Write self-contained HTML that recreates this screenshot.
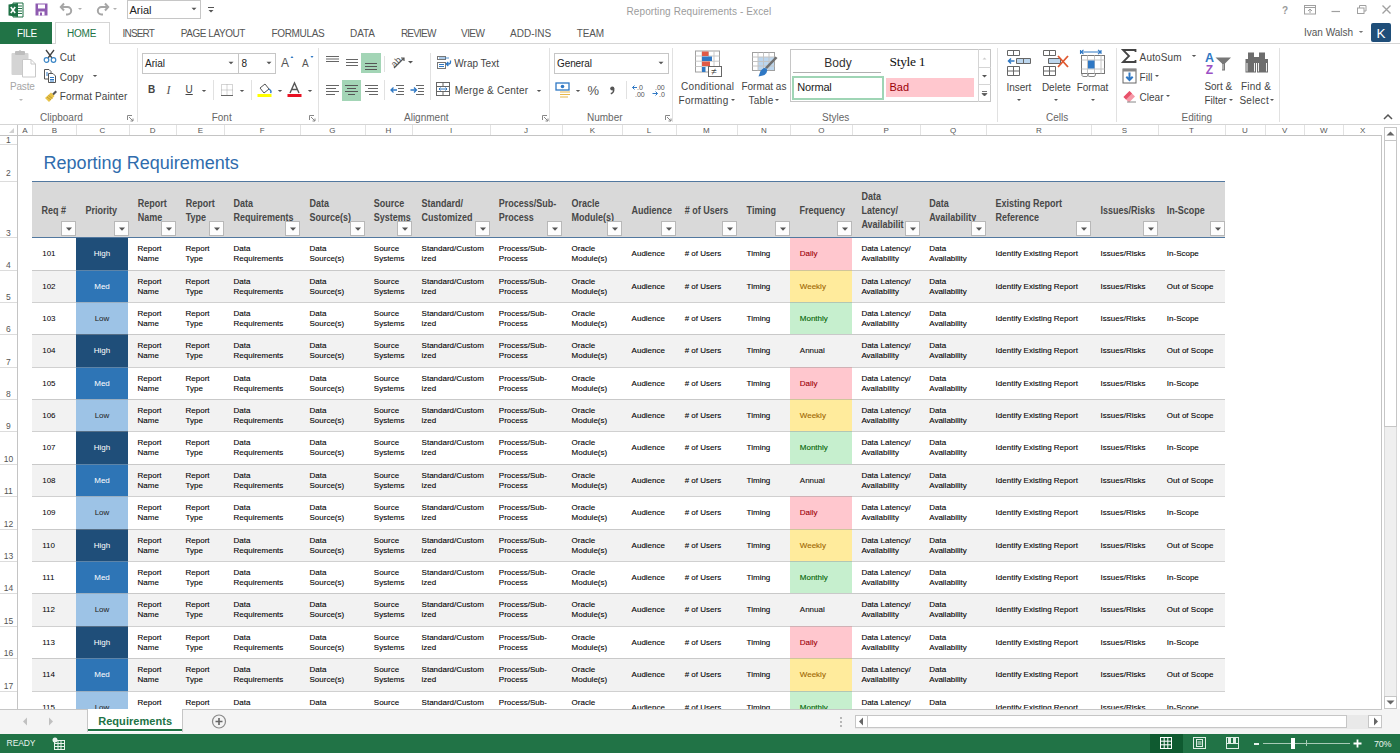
<!DOCTYPE html>
<html><head><meta charset="utf-8"><title>Reporting Requirements - Excel</title>
<style>
html,body{margin:0;padding:0;}
body{width:1400px;height:753px;position:relative;overflow:hidden;background:#fff;font-family:"Liberation Sans", sans-serif;}
.a{position:absolute;}
.t{white-space:nowrap;}
svg.a{overflow:visible;}
</style></head><body>
<svg class="a" style="left:8px;top:2px" width="16" height="16" viewBox="0 0 16 16"><path d="M5 1 L15 1 L15 15 L5 15 Z" fill="#fff" stroke="#1e7145" stroke-width="1"/><path d="M10 4h4M10 6.5h4M10 9h4M10 11.5h4" stroke="#1e7145" stroke-width="1"/><path d="M0.5 2.5 L10 1 L10 15 L0.5 13.5 Z" fill="#1e7145"/><path d="M2.8 5 L7.2 11 M7.2 5 L2.8 11" stroke="#fff" stroke-width="1.6"/></svg>
<svg class="a" style="left:35px;top:3px" width="13" height="13" viewBox="0 0 13 13"><path d="M0.5 0.5 H12.5 V12.5 H0.5 Z" fill="#8e5bb0"/><rect x="3" y="1.5" width="7" height="4" fill="#fff"/><rect x="3.5" y="8.5" width="6" height="4" fill="#fff"/><rect x="5" y="9.5" width="2" height="3" fill="#8e5bb0"/></svg>
<svg class="a" style="left:59px;top:2px" width="15" height="13" viewBox="0 0 15 13"><path d="M5 1.5 L1.8 5 L5 8.5" fill="none" stroke="#a6a6a6" stroke-width="2"/><path d="M2 5 H8.5 A3.6 3.6 0 0 1 8.5 12.4 H7" fill="none" stroke="#a6a6a6" stroke-width="2"/></svg>
<svg class="a" style="left:76px;top:6px" width="8" height="6" viewBox="0 0 8 6"><path d="M2 2.0 L6 2.0 L4 4.0 Z" fill="#b0b0b0"/></svg>
<svg class="a" style="left:95px;top:2px" width="15" height="13" viewBox="0 0 15 13"><path d="M10 1.5 L13.2 5 L10 8.5" fill="none" stroke="#a6a6a6" stroke-width="2"/><path d="M13 5 H6.5 A3.6 3.6 0 0 0 6.5 12.4 H8" fill="none" stroke="#a6a6a6" stroke-width="2"/></svg>
<svg class="a" style="left:111px;top:6px" width="8" height="6" viewBox="0 0 8 6"><path d="M2 2.0 L6 2.0 L4 4.0 Z" fill="#b0b0b0"/></svg>
<div class="a" style="left:127px;top:0px;width:74px;height:19px;border:1px solid #c6c6c6;background:#fff;box-sizing:border-box;"></div>
<div class="a t" style="left:129.50px;top:5.46px;font-size:11px;line-height:11px;color:#222;font-weight:400;">Arial</div>
<svg class="a" style="left:190px;top:6px" width="8" height="6" viewBox="0 0 8 6"><path d="M1.5 1.75 L6.5 1.75 L4 4.25 Z" fill="#555"/></svg>
<svg class="a" style="left:207px;top:6px" width="8" height="8" viewBox="0 0 8 8"><path d="M1 1.5 H7" stroke="#555" stroke-width="1"/><path d="M1.5 4 H6.5 L4 6.5 Z" fill="#555"/></svg>
<div class="a t" style="left:626.50px;top:7.30px;font-size:10px;line-height:10px;color:#9c9c9c;font-weight:400;letter-spacing:0.1px">Reporting Requirements - Excel</div>
<svg class="a" style="left:1280px;top:4px" width="112" height="12" viewBox="0 0 112 12"><text x="2" y="9.5" font-family="Liberation Sans" font-size="10" font-weight="700" fill="#9a9a9a">?</text><rect x="24.5" y="1.5" width="11" height="8.5" fill="none" stroke="#a0a0a0" stroke-width="1"/><path d="M25 3.5 H35" stroke="#a0a0a0"/><path d="M30 9 V5 M28 7 L30 5 L32 7" fill="none" stroke="#a0a0a0"/><path d="M51.5 7.5 H60" stroke="#a0a0a0" stroke-width="1.2"/><rect x="77.5" y="4" width="6.5" height="5.5" fill="none" stroke="#a0a0a0"/><path d="M79.5 4 V1.5 H86 V7 H84" fill="none" stroke="#a0a0a0"/><path d="M102.5 1.5 L110.5 9.5 M110.5 1.5 L102.5 9.5" stroke="#a0a0a0" stroke-width="1.3"/></svg>
<div class="a" style="left:0px;top:43px;width:1400px;height:1px;background:#d5d5d5;"></div>
<div class="a" style="left:0px;top:22px;width:52px;height:22px;background:#217346;"></div>
<div class="a t" style="left:17.00px;top:28.79px;font-size:10px;line-height:10px;color:#fff;font-weight:400;letter-spacing:-0.3px">FILE</div>
<div class="a" style="left:55px;top:22px;width:55px;height:22px;background:#fff;border:1px solid #d5d5d5;border-bottom:none;box-sizing:border-box;"></div>
<div class="a t" style="left:67.00px;top:28.79px;font-size:10px;line-height:10px;color:#217346;font-weight:400;letter-spacing:-0.2px">HOME</div>
<div class="a t" style="left:122.60px;top:28.79px;font-size:10px;line-height:10px;color:#555;font-weight:400;letter-spacing:-0.85px">INSERT</div>
<div class="a t" style="left:180.70px;top:28.79px;font-size:10px;line-height:10px;color:#555;font-weight:400;letter-spacing:-0.44px">PAGE LAYOUT</div>
<div class="a t" style="left:271.60px;top:28.79px;font-size:10px;line-height:10px;color:#555;font-weight:400;letter-spacing:-0.36px">FORMULAS</div>
<div class="a t" style="left:350.00px;top:28.79px;font-size:10px;line-height:10px;color:#555;font-weight:400;letter-spacing:-0.07px">DATA</div>
<div class="a t" style="left:400.90px;top:28.79px;font-size:10px;line-height:10px;color:#555;font-weight:400;letter-spacing:-0.79px">REVIEW</div>
<div class="a t" style="left:461.00px;top:28.79px;font-size:10px;line-height:10px;color:#555;font-weight:400;letter-spacing:-0.54px">VIEW</div>
<div class="a t" style="left:510.00px;top:28.79px;font-size:10px;line-height:10px;color:#555;font-weight:400;letter-spacing:0.03px">ADD-INS</div>
<div class="a t" style="left:576.70px;top:28.79px;font-size:10px;line-height:10px;color:#555;font-weight:400;letter-spacing:-0.12px">TEAM</div>
<div class="a t" style="left:1304.00px;top:28.20px;font-size:10px;line-height:10px;color:#555;font-weight:400;">Ivan Walsh</div>
<svg class="a" style="left:1357px;top:29px" width="8" height="6" viewBox="0 0 8 6"><path d="M1.7999999999999998 1.9 L6.2 1.9 L4 4.1 Z" fill="#777"/></svg>
<div class="a" style="left:1371px;top:23px;width:20px;height:19px;background:#1f4e79;border-radius:2px;"></div>
<div class="a t" style="left:1371.00px;width:20px;text-align:center;top:26.74px;font-size:13.5px;line-height:13.5px;color:#fff;font-weight:400;font-weight:400">K</div>
<div class="a" style="left:0px;top:124px;width:1400px;height:1px;background:#d5d5d5;"></div>
<div class="a" style="left:137px;top:48px;width:1px;height:74px;background:#e1e1e1;"></div>
<div class="a" style="left:318px;top:48px;width:1px;height:74px;background:#e1e1e1;"></div>
<div class="a" style="left:549px;top:48px;width:1px;height:74px;background:#e1e1e1;"></div>
<div class="a" style="left:672px;top:48px;width:1px;height:74px;background:#e1e1e1;"></div>
<div class="a" style="left:997px;top:48px;width:1px;height:74px;background:#e1e1e1;"></div>
<div class="a" style="left:1116px;top:48px;width:1px;height:74px;background:#e1e1e1;"></div>
<div class="a" style="left:1279px;top:48px;width:1px;height:74px;background:#e1e1e1;"></div>
<div class="a t" style="left:40.00px;top:113.19px;font-size:10px;line-height:10px;color:#666;font-weight:400;">Clipboard</div>
<div class="a t" style="left:211.70px;top:113.19px;font-size:10px;line-height:10px;color:#666;font-weight:400;">Font</div>
<div class="a t" style="left:404.00px;top:113.19px;font-size:10px;line-height:10px;color:#666;font-weight:400;">Alignment</div>
<div class="a t" style="left:587.00px;top:113.19px;font-size:10px;line-height:10px;color:#666;font-weight:400;">Number</div>
<div class="a t" style="left:822.00px;top:113.19px;font-size:10px;line-height:10px;color:#666;font-weight:400;">Styles</div>
<div class="a t" style="left:1046.00px;top:113.19px;font-size:10px;line-height:10px;color:#666;font-weight:400;">Cells</div>
<div class="a t" style="left:1181.60px;top:113.19px;font-size:10px;line-height:10px;color:#666;font-weight:400;">Editing</div>
<svg class="a" style="left:127px;top:115px" width="7" height="7" viewBox="0 0 7 7"><path d="M0.5 5 V0.5 H5" fill="none" stroke="#888"/><path d="M2 2 L6 6 M3.5 6 H6 V3.5" fill="none" stroke="#888"/></svg>
<svg class="a" style="left:309px;top:115px" width="7" height="7" viewBox="0 0 7 7"><path d="M0.5 5 V0.5 H5" fill="none" stroke="#888"/><path d="M2 2 L6 6 M3.5 6 H6 V3.5" fill="none" stroke="#888"/></svg>
<svg class="a" style="left:542px;top:115px" width="7" height="7" viewBox="0 0 7 7"><path d="M0.5 5 V0.5 H5" fill="none" stroke="#888"/><path d="M2 2 L6 6 M3.5 6 H6 V3.5" fill="none" stroke="#888"/></svg>
<svg class="a" style="left:665px;top:115px" width="7" height="7" viewBox="0 0 7 7"><path d="M0.5 5 V0.5 H5" fill="none" stroke="#888"/><path d="M2 2 L6 6 M3.5 6 H6 V3.5" fill="none" stroke="#888"/></svg>
<svg class="a" style="left:1383px;top:114px" width="10" height="6" viewBox="0 0 10 6"><path d="M1 5 L5 1 L9 5" fill="none" stroke="#555" stroke-width="1.5"/></svg>
<svg class="a" style="left:10px;top:50px" width="28" height="28" viewBox="0 0 28 28"><rect x="1.5" y="3" width="17" height="22" rx="1" fill="#d4d4d4"/><rect x="5" y="1" width="10" height="4" rx="1" fill="#bdbdbd"/><circle cx="10" cy="1.5" r="1.3" fill="#bdbdbd"/><path d="M12.5 9.5 H21 L25.5 14 V27 H12.5 Z" fill="#fff" stroke="#c8c8c8"/><path d="M21 9.5 V14 H25.5" fill="none" stroke="#c8c8c8"/></svg>
<div class="a t" style="left:10.00px;top:81.69px;font-size:10px;line-height:10px;color:#a6a6a6;font-weight:400;letter-spacing:-0.2px">Paste</div>
<svg class="a" style="left:17px;top:97px" width="8" height="6" viewBox="0 0 8 6"><path d="M2 2.0 L6 2.0 L4 4.0 Z" fill="#b8b8b8"/></svg>
<svg class="a" style="left:43px;top:49px" width="14" height="14" viewBox="0 0 14 14"><path d="M3 1 L9 9 M11 1 L5 9" stroke="#444" stroke-width="1.3"/><circle cx="3.5" cy="11" r="2.3" fill="none" stroke="#3b86c6" stroke-width="1.2"/><circle cx="10.5" cy="11" r="2.3" fill="none" stroke="#3b86c6" stroke-width="1.2"/></svg>
<div class="a t" style="left:59.80px;top:52.90px;font-size:10px;line-height:10px;color:#444;font-weight:400;">Cut</div>
<svg class="a" style="left:43px;top:69px" width="14" height="14" viewBox="0 0 14 14"><path d="M1.5 0.5 H6 L8 2.5 V10 H1.5 Z" fill="#fff" stroke="#555"/><path d="M5.5 4.5 H10 L12.5 7 V13.5 H5.5 Z" fill="#fff" stroke="#555"/><path d="M7 8.5 H11 M7 10.5 H11 M7 12 H11" stroke="#2f78c4"/><path d="M3 4 H5 M3 6 H5" stroke="#2f78c4"/></svg>
<div class="a t" style="left:59.80px;top:72.59px;font-size:10px;line-height:10px;color:#444;font-weight:400;">Copy</div>
<svg class="a" style="left:91px;top:73px" width="8" height="6" viewBox="0 0 8 6"><path d="M1.7999999999999998 1.9 L6.2 1.9 L4 4.1 Z" fill="#555"/></svg>
<svg class="a" style="left:43px;top:89px" width="15" height="14" viewBox="0 0 15 14"><path d="M9 5 L12.5 1.5 L14 3 L10.5 6.5 Z" fill="#555"/><path d="M2 9 L8 3.5 L11.5 7 L6 13 Z" fill="#e8c34a"/><path d="M4 8 L8 11 M5.5 6.5 L9.5 9.5" stroke="#b8922a" stroke-width="0.8"/></svg>
<div class="a t" style="left:59.80px;top:92.39px;font-size:10px;line-height:10px;color:#444;font-weight:400;letter-spacing:0.1px">Format Painter</div>
<div class="a" style="left:142px;top:53px;width:97px;height:21px;border:1px solid #c6c6c6;background:#fff;box-sizing:border-box;"></div>
<div class="a" style="left:238px;top:53px;width:38px;height:21px;border:1px solid #c6c6c6;background:#fff;box-sizing:border-box;"></div>
<div class="a t" style="left:145.00px;top:59.40px;font-size:10px;line-height:10px;color:#222;font-weight:400;">Arial</div>
<svg class="a" style="left:227px;top:60px" width="8" height="6" viewBox="0 0 8 6"><path d="M1.5 1.75 L6.5 1.75 L4 4.25 Z" fill="#555"/></svg>
<div class="a t" style="left:241.50px;top:59.40px;font-size:10px;line-height:10px;color:#222;font-weight:400;">8</div>
<svg class="a" style="left:265px;top:60px" width="8" height="6" viewBox="0 0 8 6"><path d="M1.5 1.75 L6.5 1.75 L4 4.25 Z" fill="#555"/></svg>
<svg class="a" style="left:280px;top:55px" width="34" height="14" viewBox="0 0 34 14"><text x="1" y="12" font-family="Liberation Sans" font-size="12" fill="#555">A</text><path d="M10.5 3 L12 1 L13.5 3 Z" fill="#2f78c4"/><text x="22" y="12" font-family="Liberation Sans" font-size="10" fill="#555">A</text><path d="M30.5 1 L32 3 L33.5 1 Z" fill="#2f78c4"/></svg>
<div class="a t" style="left:148.00px;top:84.80px;font-size:10px;line-height:10px;color:#444;font-weight:700;">B</div>
<div class="a t" style="left:166.50px;top:83.73px;font-size:12px;line-height:12px;color:#555;font-weight:400;font-style:italic;font-family:'Liberation Serif';">I</div>
<div class="a t" style="left:185.50px;top:84.80px;font-size:10px;line-height:10px;color:#444;font-weight:400;text-decoration:underline">U</div>
<svg class="a" style="left:200px;top:88px" width="8" height="6" viewBox="0 0 8 6"><path d="M1.7999999999999998 1.9 L6.2 1.9 L4 4.1 Z" fill="#555"/></svg>
<div class="a" style="left:213px;top:80px;width:1px;height:20px;background:#e1e1e1;"></div>
<svg class="a" style="left:220px;top:83px" width="14" height="14" viewBox="0 0 14 14"><rect x="1.5" y="1.5" width="11" height="11" fill="none" stroke="#aaa" stroke-dasharray="1 1"/><path d="M7 1.5 V12.5 M1.5 7 H12.5" stroke="#aaa" stroke-dasharray="1 1"/><path d="M1 12.5 H13" stroke="#666"/></svg>
<svg class="a" style="left:238px;top:88px" width="8" height="6" viewBox="0 0 8 6"><path d="M1.7999999999999998 1.9 L6.2 1.9 L4 4.1 Z" fill="#555"/></svg>
<div class="a" style="left:251px;top:80px;width:1px;height:20px;background:#e1e1e1;"></div>
<svg class="a" style="left:257px;top:82px" width="16" height="16" viewBox="0 0 16 16"><path d="M3 6 L8 2 L12 7 L7 11 Z" fill="#fff" stroke="#555"/><path d="M12 7 Q15 9 13.5 11" fill="none" stroke="#2f78c4" stroke-width="1.5"/><rect x="0.5" y="12" width="14" height="3" fill="#ffff00"/></svg>
<svg class="a" style="left:275.5px;top:88px" width="8" height="6" viewBox="0 0 8 6"><path d="M1.7999999999999998 1.9 L6.2 1.9 L4 4.1 Z" fill="#555"/></svg>
<svg class="a" style="left:287px;top:82px" width="16" height="16" viewBox="0 0 16 16"><path d="M3 11 L7.5 1 L12 11 M4.8 7.5 H10.2" fill="none" stroke="#555" stroke-width="1.4"/><rect x="0.5" y="12" width="14" height="3" fill="#e81123"/></svg>
<svg class="a" style="left:305.5px;top:88px" width="8" height="6" viewBox="0 0 8 6"><path d="M1.7999999999999998 1.9 L6.2 1.9 L4 4.1 Z" fill="#555"/></svg>
<svg class="a" style="left:326px;top:56px" width="13" height="7" viewBox="0 0 13 7"><path d="M0 0.5 H13" stroke="#666" stroke-width="1"/><path d="M0 3.0 H13" stroke="#666" stroke-width="1"/><path d="M0 5.5 H13" stroke="#666" stroke-width="1"/></svg>
<svg class="a" style="left:346px;top:59px" width="12" height="8" viewBox="0 0 12 8"><path d="M0 0.5 H12" stroke="#666" stroke-width="1"/><path d="M0 3.5 H12" stroke="#666" stroke-width="1"/><path d="M0 6.5 H12" stroke="#666" stroke-width="1"/></svg>
<div class="a" style="left:361px;top:53px;width:20px;height:20px;background:#a3d5b6;"></div>
<svg class="a" style="left:365px;top:63px" width="12" height="8" viewBox="0 0 12 8"><path d="M0 0.5 H12" stroke="#555" stroke-width="1"/><path d="M0 3.5 H12" stroke="#555" stroke-width="1"/><path d="M0 6.5 H12" stroke="#555" stroke-width="1"/></svg>
<div class="a" style="left:384px;top:56px;width:1px;height:16px;background:#e1e1e1;"></div>
<svg class="a" style="left:390px;top:54px" width="24" height="16" viewBox="0 0 24 16"><text x="1" y="11" font-family="Liberation Sans" font-size="9" fill="#555" transform="rotate(-45 6 8)">ab</text><path d="M4 14 L14 4 M11 4 H14 V7" fill="none" stroke="#555" stroke-width="1.2"/><path d="M18 7 H23 L20.5 9.5 Z" fill="#555"/></svg>
<svg class="a" style="left:326px;top:85px" width="13" height="11" viewBox="0 0 13 11"><path d="M0 0.5 H13" stroke="#666" stroke-width="1"/><path d="M0 3.5 H10" stroke="#666" stroke-width="1"/><path d="M0 6.5 H13" stroke="#666" stroke-width="1"/><path d="M0 9.5 H9" stroke="#666" stroke-width="1"/></svg>
<div class="a" style="left:342px;top:80px;width:19px;height:21px;background:#a3d5b6;"></div>
<svg class="a" style="left:345px;top:85px" width="13" height="11" viewBox="0 0 13 11"><path d="M0 0.5 H13" stroke="#555" stroke-width="1"/><path d="M2 3.5 H11" stroke="#555" stroke-width="1"/><path d="M0 6.5 H13" stroke="#555" stroke-width="1"/><path d="M3 9.5 H10" stroke="#555" stroke-width="1"/></svg>
<svg class="a" style="left:364.5px;top:85px" width="13" height="11" viewBox="0 0 13 11"><path d="M0 0.5 H13" stroke="#666" stroke-width="1"/><path d="M3 3.5 H13" stroke="#666" stroke-width="1"/><path d="M0 6.5 H13" stroke="#666" stroke-width="1"/><path d="M4 9.5 H13" stroke="#666" stroke-width="1"/></svg>
<div class="a" style="left:384px;top:80px;width:1px;height:20px;background:#e1e1e1;"></div>
<svg class="a" style="left:390px;top:84px" width="15" height="12" viewBox="0 0 15 12"><path d="M6 1.5 H14 M8 4.5 H14 M8 7.5 H14 M6 10.5 H14" stroke="#666"/><path d="M1 6 H7 M3.5 3.5 L1 6 L3.5 8.5" fill="none" stroke="#2f78c4" stroke-width="1.3"/></svg>
<svg class="a" style="left:410px;top:84px" width="15" height="12" viewBox="0 0 15 12"><path d="M6 1.5 H14 M8 4.5 H14 M8 7.5 H14 M6 10.5 H14" stroke="#666"/><path d="M0.5 6 H6.5 M4 3.5 L6.5 6 L4 8.5" fill="none" stroke="#2f78c4" stroke-width="1.3"/></svg>
<div class="a" style="left:430px;top:53px;width:1px;height:47px;background:#e1e1e1;"></div>
<svg class="a" style="left:436px;top:55px" width="17" height="15" viewBox="0 0 17 15"><rect x="1.5" y="1.5" width="8" height="3" fill="#fff" stroke="#777"/><rect x="1.5" y="7.5" width="8" height="6" fill="#fff" stroke="#777"/><path d="M3 9.5 H8 M3 11.5 H8" stroke="#2f78c4"/><path d="M3 3 H13" stroke="#2f78c4" stroke-width="0.8"/><path d="M14.5 5.5 V7 Q14.5 9 12.5 9 H10.5 M12.3 7 L10.3 9 L12.3 11" fill="none" stroke="#2f78c4" stroke-width="1.3"/></svg>
<div class="a t" style="left:454.30px;top:59.20px;font-size:10px;line-height:10px;color:#444;font-weight:400;">Wrap Text</div>
<svg class="a" style="left:436px;top:82px" width="15" height="15" viewBox="0 0 15 15"><rect x="0.5" y="0.5" width="13" height="13" fill="#fff" stroke="#666"/><path d="M0.5 4.5 H13.5 M0.5 9.5 H13.5 M7 0.5 V4.5 M7 9.5 V13.5" stroke="#666"/><path d="M3 7 H11 M4.5 5.5 L3 7 L4.5 8.5 M9.5 5.5 L11 7 L9.5 8.5" fill="none" stroke="#2f78c4"/></svg>
<div class="a t" style="left:454.80px;top:85.89px;font-size:10px;line-height:10px;color:#444;font-weight:400;letter-spacing:0.2px">Merge &amp; Center</div>
<svg class="a" style="left:535px;top:88px" width="8" height="6" viewBox="0 0 8 6"><path d="M1.7999999999999998 1.9 L6.2 1.9 L4 4.1 Z" fill="#555"/></svg>
<div class="a" style="left:554px;top:53px;width:115px;height:21px;border:1px solid #c6c6c6;background:#fff;box-sizing:border-box;"></div>
<div class="a t" style="left:557.00px;top:58.70px;font-size:10px;line-height:10px;color:#222;font-weight:400;letter-spacing:-0.1px">General</div>
<svg class="a" style="left:657px;top:60px" width="8" height="6" viewBox="0 0 8 6"><path d="M1.5 1.75 L6.5 1.75 L4 4.25 Z" fill="#555"/></svg>
<svg class="a" style="left:555px;top:82px" width="17" height="16" viewBox="0 0 17 16"><rect x="1" y="1" width="13" height="7" fill="#fff" stroke="#2f78c4" stroke-width="1.3"/><circle cx="7.5" cy="4.5" r="1.8" fill="#2f78c4"/><path d="M5 10 H15 M5 12.5 H15 M5 15 H13" stroke="#e8b84a" stroke-width="1.2"/></svg>
<svg class="a" style="left:574px;top:88px" width="8" height="6" viewBox="0 0 8 6"><path d="M1.7999999999999998 1.9 L6.2 1.9 L4 4.1 Z" fill="#555"/></svg>
<div class="a t" style="left:587.50px;top:84.40px;font-size:13px;line-height:13px;color:#555;font-weight:400;">%</div>
<svg class="a" style="left:608px;top:85px" width="8" height="10" viewBox="0 0 8 10"><circle cx="4.3" cy="3.5" r="2.1" fill="#555"/><path d="M5.6 4 Q6.2 7.5 2.8 8.8" fill="none" stroke="#555" stroke-width="1.5"/></svg>
<div class="a" style="left:626px;top:81px;width:1px;height:18px;background:#e1e1e1;"></div>
<svg class="a" style="left:632px;top:84px" width="14" height="13" viewBox="0 0 14 13"><text x="5" y="6" font-family="Liberation Sans" font-size="7" fill="#555">.0</text><text x="3" y="12.5" font-family="Liberation Sans" font-size="7" fill="#555">.00</text><path d="M0.5 3.5 H5 M2.5 1.5 L0.5 3.5 L2.5 5.5" fill="none" stroke="#2f78c4"/></svg>
<svg class="a" style="left:652px;top:84px" width="14" height="13" viewBox="0 0 14 13"><text x="3" y="6" font-family="Liberation Sans" font-size="7" fill="#555">.00</text><text x="7" y="12.5" font-family="Liberation Sans" font-size="7" fill="#555">.0</text><path d="M0.5 9.5 H5.5 M3.5 7.5 L5.5 9.5 L3.5 11.5" fill="none" stroke="#2f78c4"/></svg>
<svg class="a" style="left:695px;top:50px" width="28" height="28" viewBox="0 0 28 28"><rect x="0.5" y="1" width="24" height="21" fill="#fff" stroke="#a0a0a0"/><path d="M0.5 6 H24.5 M0.5 11.2 H24.5 M0.5 16.5 H24.5 M7 1 V22 M13.5 1 V22 M19 1 V22" stroke="#c8c8c8"/><rect x="7" y="1.5" width="6.5" height="4.5" fill="#e05a47"/><rect x="7" y="6.5" width="10" height="4.5" fill="#2f78c4"/><rect x="7" y="11.5" width="8" height="4.5" fill="#e05a47"/><rect x="7" y="17" width="3.5" height="5" fill="#2f78c4"/><rect x="13.5" y="16.5" width="13" height="10" fill="#fff" stroke="#666"/><text x="16.2" y="25" font-family="Liberation Sans" font-size="10" fill="#444">≠</text></svg>
<div class="a t" style="left:681.00px;top:82.39px;font-size:10px;line-height:10px;color:#444;font-weight:400;letter-spacing:0.3px">Conditional</div>
<div class="a t" style="left:678.60px;top:96.09px;font-size:10px;line-height:10px;color:#444;font-weight:400;letter-spacing:0.2px">Formatting</div>
<svg class="a" style="left:729px;top:97px" width="8" height="6" viewBox="0 0 8 6"><path d="M2 2.0 L6 2.0 L4 4.0 Z" fill="#555"/></svg>
<svg class="a" style="left:751px;top:51px" width="29" height="28" viewBox="0 0 29 28"><rect x="1.5" y="1.5" width="22" height="18" fill="#fff" stroke="#a0a0a0"/><rect x="7" y="6" width="16" height="13" fill="#bcd6ee"/><path d="M1.5 6 H23.5 M1.5 10.5 H23.5 M1.5 15 H23.5 M7 1.5 V19.5 M12.5 1.5 V19.5 M18 1.5 V19.5" stroke="#c4c4c4"/><path d="M26.5 7 L16 18 L14 16.5 L24.5 5.5 Z" fill="#707070"/><path d="M15.5 17.5 Q12 16 9.5 20 L7.5 25.5 L13.5 24 Q17.5 21 15.5 17.5 Z" fill="#2f78c4"/></svg>
<div class="a t" style="left:741.40px;top:82.39px;font-size:10px;line-height:10px;color:#444;font-weight:400;">Format as</div>
<div class="a t" style="left:748.60px;top:96.09px;font-size:10px;line-height:10px;color:#444;font-weight:400;letter-spacing:0.2px">Table</div>
<svg class="a" style="left:773px;top:97px" width="8" height="6" viewBox="0 0 8 6"><path d="M2 2.0 L6 2.0 L4 4.0 Z" fill="#555"/></svg>
<div class="a" style="left:790px;top:49px;width:201px;height:53px;border:1px solid #c6c6c6;background:#fff;box-sizing:border-box;"></div>
<div class="a" style="left:978px;top:49px;width:13px;height:53px;border-left:1px solid #d5d5d5;box-sizing:border-box;"></div>
<div class="a" style="left:978px;top:67px;width:13px;height:1px;background:#d5d5d5;"></div>
<div class="a" style="left:978px;top:84px;width:13px;height:1px;background:#d5d5d5;"></div>
<svg class="a" style="left:980px;top:55px" width="9" height="44" viewBox="0 0 9 44"><path d="M2.5 4.5 L4.5 2.5 L6.5 4.5 Z" fill="#ccc"/><path d="M2 20 H7 L4.5 22.5 Z" fill="#555"/><path d="M2 36.5 H7 M2 38.5 H7 L4.5 41 Z" fill="#555" stroke="#555" stroke-width="0.8"/></svg>
<div class="a t" style="left:824.30px;top:57.13px;font-size:12px;line-height:12px;color:#333;font-weight:400;">Body</div>
<div class="a" style="left:793px;top:72px;width:88px;height:1px;background:#b0b0b0;"></div>
<div class="a t" style="left:889.50px;top:55.14px;font-size:13.5px;line-height:13.5px;color:#111;font-weight:400;font-family:'Liberation Serif', serif;letter-spacing:-0.3px">Style 1</div>
<div class="a" style="left:792px;top:76px;width:92px;height:24px;border:2px solid #9fd5b5;background:#fff;box-sizing:border-box;"></div>
<div class="a t" style="left:797.30px;top:81.76px;font-size:11px;line-height:11px;color:#222;font-weight:400;letter-spacing:-0.2px">Normal</div>
<div class="a" style="left:886px;top:78px;width:88px;height:19px;background:#ffc7ce;"></div>
<div class="a t" style="left:889.50px;top:81.76px;font-size:11px;line-height:11px;color:#9c0006;font-weight:400;">Bad</div>
<svg class="a" style="left:1007px;top:50px" width="25" height="26" viewBox="0 0 25 26"><path d="M0.5 0.5 H12.5 V5.5 H0.5 Z M6.5 0.5 V5.5" fill="none" stroke="#666"/><path d="M9.5 8.5 H23.5 V13.5 H9.5 Z" fill="#bcd6ee" stroke="#666"/><path d="M16.5 8.5 V13.5" stroke="#666"/><path d="M1.5 11 H7.5 M4 8.5 L1.5 11 L4 13.5" fill="none" stroke="#2f78c4" stroke-width="1.5"/><path d="M0.5 16.5 H12.5 V25.5 H0.5 Z M6.5 16.5 V25.5 M0.5 21 H12.5" fill="none" stroke="#666"/></svg>
<div class="a t" style="left:1006.40px;top:82.69px;font-size:10px;line-height:10px;color:#444;font-weight:400;">Insert</div>
<svg class="a" style="left:1015px;top:97px" width="8" height="6" viewBox="0 0 8 6"><path d="M2 2.0 L6 2.0 L4 4.0 Z" fill="#555"/></svg>
<svg class="a" style="left:1043px;top:50px" width="27" height="26" viewBox="0 0 27 26"><path d="M0.5 0.5 H12.5 V5.5 H0.5 Z M6.5 0.5 V5.5" fill="none" stroke="#666"/><path d="M5.5 8.5 H17.5 V13.5 H5.5 Z" fill="#bcd6ee" stroke="#666"/><path d="M15 6 L25 17 M25 6 L15 17" stroke="#e0582f" stroke-width="1.8"/><path d="M0.5 16.5 H12.5 V25.5 H0.5 Z M6.5 16.5 V25.5 M0.5 21 H12.5" fill="none" stroke="#666"/></svg>
<div class="a t" style="left:1041.90px;top:82.69px;font-size:10px;line-height:10px;color:#444;font-weight:400;">Delete</div>
<svg class="a" style="left:1051.7px;top:97px" width="8" height="6" viewBox="0 0 8 6"><path d="M2 2.0 L6 2.0 L4 4.0 Z" fill="#555"/></svg>
<svg class="a" style="left:1079px;top:49px" width="27" height="29" viewBox="0 0 27 29"><path d="M1.5 1 V5 M22 1 V5 M1.5 3 H22 M4.5 0.8 L2 3 L4.5 5.2 M19 0.8 L21.5 3 L19 5.2" fill="none" stroke="#2f78c4" stroke-width="1.1"/><rect x="2.5" y="6.5" width="23" height="18" fill="#fff" stroke="#777"/><path d="M2.5 11 H25.5 M2.5 20 H25.5 M8.5 6.5 V24.5 M15.5 6.5 V24.5 M22 6.5 V24.5" stroke="#c4c4c4"/><rect x="9" y="11.5" width="6.5" height="8" fill="#2f78c4"/><path d="M3 24.5 V26.5 Q3 27.5 5 27.5 H8 Q9 27.5 9 25 M9 25 V26.5 Q9 27.5 11 27.5 H15 Q16.5 27.5 16.5 25" fill="none" stroke="#888"/></svg>
<div class="a t" style="left:1076.70px;top:82.69px;font-size:10px;line-height:10px;color:#444;font-weight:400;">Format</div>
<svg class="a" style="left:1089px;top:97px" width="8" height="6" viewBox="0 0 8 6"><path d="M2 2.0 L6 2.0 L4 4.0 Z" fill="#555"/></svg>
<svg class="a" style="left:1122px;top:49px" width="15" height="14" viewBox="0 0 15 14"><path d="M13.5 3 V1 H1 L7 7 L1 13 H13.5 V11" fill="none" stroke="#444" stroke-width="1.8"/></svg>
<div class="a t" style="left:1139.60px;top:52.70px;font-size:10px;line-height:10px;color:#444;font-weight:400;letter-spacing:0.15px">AutoSum</div>
<svg class="a" style="left:1190px;top:53px" width="8" height="6" viewBox="0 0 8 6"><path d="M1.7999999999999998 1.9 L6.2 1.9 L4 4.1 Z" fill="#555"/></svg>
<svg class="a" style="left:1122px;top:68px" width="15" height="16" viewBox="0 0 15 16"><rect x="1" y="1" width="13" height="14" fill="#fff" stroke="#666"/><rect x="1" y="1" width="13" height="2.5" fill="#888"/><path d="M7.5 4.5 V12 M4.3 8.8 L7.5 12 L10.7 8.8" fill="none" stroke="#2f78c4" stroke-width="2"/></svg>
<div class="a t" style="left:1139.60px;top:72.69px;font-size:10px;line-height:10px;color:#444;font-weight:400;">Fill</div>
<svg class="a" style="left:1153px;top:73px" width="8" height="6" viewBox="0 0 8 6"><path d="M2 2.0 L6 2.0 L4 4.0 Z" fill="#555"/></svg>
<svg class="a" style="left:1122px;top:89px" width="15" height="14" viewBox="0 0 15 14"><path d="M1.5 8 L7.5 2 L13 7.5 L7 13.5 Z" fill="#f59aa8"/><path d="M1.5 8 L4 10.5 L10 4.5 L7.5 2 Z" fill="#e8516a"/><path d="M5 13 H14" stroke="#888"/></svg>
<div class="a t" style="left:1139.60px;top:92.69px;font-size:10px;line-height:10px;color:#444;font-weight:400;">Clear</div>
<svg class="a" style="left:1163.5px;top:93px" width="8" height="6" viewBox="0 0 8 6"><path d="M2 2.0 L6 2.0 L4 4.0 Z" fill="#555"/></svg>
<svg class="a" style="left:1205px;top:51px" width="28" height="24" viewBox="0 0 28 24"><text x="0" y="10.5" font-family="Liberation Sans" font-size="12.5" font-weight="700" fill="#2f78c4">A</text><text x="0.8" y="23" font-family="Liberation Sans" font-size="12" font-weight="700" fill="#9b4fc4">Z</text><path d="M10.5 6.5 H26 L20 12.5 V19.5 L17 19.5 V12.5 Z" fill="#777"/><path d="M18 13 V18.5" stroke="#fff" stroke-width="0.8"/></svg>
<div class="a t" style="left:1204.40px;top:81.89px;font-size:10px;line-height:10px;color:#444;font-weight:400;">Sort &amp;</div>
<div class="a t" style="left:1204.40px;top:96.09px;font-size:10px;line-height:10px;color:#444;font-weight:400;">Filter</div>
<svg class="a" style="left:1227px;top:97px" width="8" height="6" viewBox="0 0 8 6"><path d="M2 2.0 L6 2.0 L4 4.0 Z" fill="#555"/></svg>
<svg class="a" style="left:1245px;top:51px" width="24" height="22" viewBox="0 0 24 22"><rect x="3" y="1.5" width="6" height="8" fill="#6d6d6d"/><rect x="14" y="1.5" width="6" height="8" fill="#6d6d6d"/><rect x="0.5" y="8" width="10.5" height="13.5" fill="#6d6d6d"/><rect x="12" y="8" width="11" height="13.5" fill="#6d6d6d"/><rect x="9" y="6" width="5" height="6" fill="#6d6d6d"/><path d="M2 12 V20.5 M13.5 12 V20.5 M21.5 12 V20.5 M9.5 12 V20.5" stroke="#fff" stroke-width="0.9"/></svg>
<div class="a t" style="left:1241.00px;top:81.89px;font-size:10px;line-height:10px;color:#444;font-weight:400;letter-spacing:0.2px">Find &amp;</div>
<div class="a t" style="left:1239.40px;top:96.09px;font-size:10px;line-height:10px;color:#444;font-weight:400;letter-spacing:0.3px">Select</div>
<svg class="a" style="left:1267.5px;top:97px" width="8" height="6" viewBox="0 0 8 6"><path d="M2 2.0 L6 2.0 L4 4.0 Z" fill="#555"/></svg>
<div class="a" style="left:0px;top:125px;width:1382px;height:11px;background:#fff;"></div>
<div class="a" style="left:0px;top:135px;width:1382px;height:1px;background:#c4c4c4;"></div>
<div class="a" style="left:32px;top:125px;width:1px;height:10px;background:#e2e2e2;"></div>
<div class="a t" style="left:9.85px;width:30px;text-align:center;top:126.66px;font-size:8px;line-height:8px;color:#555;font-weight:400;">A</div>
<div class="a" style="left:76px;top:125px;width:1px;height:10px;background:#e2e2e2;"></div>
<div class="a t" style="left:39.35px;width:30px;text-align:center;top:126.66px;font-size:8px;line-height:8px;color:#555;font-weight:400;">B</div>
<div class="a" style="left:129px;top:125px;width:1px;height:10px;background:#e2e2e2;"></div>
<div class="a t" style="left:87.50px;width:30px;text-align:center;top:126.66px;font-size:8px;line-height:8px;color:#555;font-weight:400;">C</div>
<div class="a" style="left:176px;top:125px;width:1px;height:10px;background:#e2e2e2;"></div>
<div class="a t" style="left:137.55px;width:30px;text-align:center;top:126.66px;font-size:8px;line-height:8px;color:#555;font-weight:400;">D</div>
<div class="a" style="left:224px;top:125px;width:1px;height:10px;background:#e2e2e2;"></div>
<div class="a t" style="left:185.40px;width:30px;text-align:center;top:126.66px;font-size:8px;line-height:8px;color:#555;font-weight:400;">E</div>
<div class="a" style="left:300px;top:125px;width:1px;height:10px;background:#e2e2e2;"></div>
<div class="a t" style="left:247.30px;width:30px;text-align:center;top:126.66px;font-size:8px;line-height:8px;color:#555;font-weight:400;">F</div>
<div class="a" style="left:365px;top:125px;width:1px;height:10px;background:#e2e2e2;"></div>
<div class="a t" style="left:317.45px;width:30px;text-align:center;top:126.66px;font-size:8px;line-height:8px;color:#555;font-weight:400;">G</div>
<div class="a" style="left:412px;top:125px;width:1px;height:10px;background:#e2e2e2;"></div>
<div class="a t" style="left:373.50px;width:30px;text-align:center;top:126.66px;font-size:8px;line-height:8px;color:#555;font-weight:400;">H</div>
<div class="a" style="left:490px;top:125px;width:1px;height:10px;background:#e2e2e2;"></div>
<div class="a t" style="left:436.00px;width:30px;text-align:center;top:126.66px;font-size:8px;line-height:8px;color:#555;font-weight:400;">I</div>
<div class="a" style="left:562px;top:125px;width:1px;height:10px;background:#e2e2e2;"></div>
<div class="a t" style="left:511.00px;width:30px;text-align:center;top:126.66px;font-size:8px;line-height:8px;color:#555;font-weight:400;">J</div>
<div class="a" style="left:622px;top:125px;width:1px;height:10px;background:#e2e2e2;"></div>
<div class="a t" style="left:577.40px;width:30px;text-align:center;top:126.66px;font-size:8px;line-height:8px;color:#555;font-weight:400;">K</div>
<div class="a" style="left:676px;top:125px;width:1px;height:10px;background:#e2e2e2;"></div>
<div class="a t" style="left:633.95px;width:30px;text-align:center;top:126.66px;font-size:8px;line-height:8px;color:#555;font-weight:400;">L</div>
<div class="a" style="left:737px;top:125px;width:1px;height:10px;background:#e2e2e2;"></div>
<div class="a t" style="left:691.45px;width:30px;text-align:center;top:126.66px;font-size:8px;line-height:8px;color:#555;font-weight:400;">M</div>
<div class="a" style="left:790px;top:125px;width:1px;height:10px;background:#e2e2e2;"></div>
<div class="a t" style="left:748.85px;width:30px;text-align:center;top:126.66px;font-size:8px;line-height:8px;color:#555;font-weight:400;">N</div>
<div class="a" style="left:852px;top:125px;width:1px;height:10px;background:#e2e2e2;"></div>
<div class="a t" style="left:806.25px;width:30px;text-align:center;top:126.66px;font-size:8px;line-height:8px;color:#555;font-weight:400;">O</div>
<div class="a" style="left:920px;top:125px;width:1px;height:10px;background:#e2e2e2;"></div>
<div class="a t" style="left:871.10px;width:30px;text-align:center;top:126.66px;font-size:8px;line-height:8px;color:#555;font-weight:400;">P</div>
<div class="a" style="left:986px;top:125px;width:1px;height:10px;background:#e2e2e2;"></div>
<div class="a t" style="left:938.20px;width:30px;text-align:center;top:126.66px;font-size:8px;line-height:8px;color:#555;font-weight:400;">Q</div>
<div class="a" style="left:1091px;top:125px;width:1px;height:10px;background:#e2e2e2;"></div>
<div class="a t" style="left:1023.90px;width:30px;text-align:center;top:126.66px;font-size:8px;line-height:8px;color:#555;font-weight:400;">R</div>
<div class="a" style="left:1158px;top:125px;width:1px;height:10px;background:#e2e2e2;"></div>
<div class="a t" style="left:1109.50px;width:30px;text-align:center;top:126.66px;font-size:8px;line-height:8px;color:#555;font-weight:400;">S</div>
<div class="a" style="left:1225px;top:125px;width:1px;height:10px;background:#e2e2e2;"></div>
<div class="a t" style="left:1176.50px;width:30px;text-align:center;top:126.66px;font-size:8px;line-height:8px;color:#555;font-weight:400;">T</div>
<div class="a" style="left:1265px;top:125px;width:1px;height:10px;background:#e2e2e2;"></div>
<div class="a t" style="left:1230.00px;width:30px;text-align:center;top:126.66px;font-size:8px;line-height:8px;color:#555;font-weight:400;">U</div>
<div class="a" style="left:1304px;top:125px;width:1px;height:10px;background:#e2e2e2;"></div>
<div class="a t" style="left:1269.55px;width:30px;text-align:center;top:126.66px;font-size:8px;line-height:8px;color:#555;font-weight:400;">V</div>
<div class="a" style="left:1343px;top:125px;width:1px;height:10px;background:#e2e2e2;"></div>
<div class="a t" style="left:1308.90px;width:30px;text-align:center;top:126.66px;font-size:8px;line-height:8px;color:#555;font-weight:400;">W</div>
<div class="a t" style="left:1347.65px;width:30px;text-align:center;top:126.66px;font-size:8px;line-height:8px;color:#555;font-weight:400;">X</div>
<div class="a" style="left:17px;top:125px;width:1px;height:584px;background:#c4c4c4;"></div>
<svg class="a" style="left:8px;top:127px" width="7" height="7" viewBox="0 0 7 7"><path d="M6 1 V6 H1 Z" fill="#d0d0d0"/></svg>
<div class="a" style="left:1381px;top:135px;width:1px;height:575px;background:#c4c4c4;"></div>
<div class="a" style="left:0px;top:144px;width:17px;height:1px;background:#dcdcdc;"></div>
<div class="a t" style="left:-1.60px;width:20px;text-align:center;top:135.89px;font-size:8.5px;line-height:8.5px;color:#555;font-weight:400;">1</div>
<div class="a" style="left:0px;top:181px;width:17px;height:1px;background:#dcdcdc;"></div>
<div class="a t" style="left:-1.60px;width:20px;text-align:center;top:168.89px;font-size:8.5px;line-height:8.5px;color:#555;font-weight:400;">2</div>
<div class="a" style="left:0px;top:237px;width:17px;height:1px;background:#dcdcdc;"></div>
<div class="a t" style="left:-1.60px;width:20px;text-align:center;top:228.59px;font-size:8.5px;line-height:8.5px;color:#555;font-weight:400;">3</div>
<div class="a" style="left:0px;top:270px;width:17px;height:1px;background:#dcdcdc;"></div>
<div class="a t" style="left:-1.60px;width:20px;text-align:center;top:261.39px;font-size:8.5px;line-height:8.5px;color:#555;font-weight:400;">4</div>
<div class="a" style="left:0px;top:302px;width:17px;height:1px;background:#dcdcdc;"></div>
<div class="a t" style="left:-1.60px;width:20px;text-align:center;top:293.39px;font-size:8.5px;line-height:8.5px;color:#555;font-weight:400;">5</div>
<div class="a" style="left:0px;top:334px;width:17px;height:1px;background:#dcdcdc;"></div>
<div class="a t" style="left:-1.60px;width:20px;text-align:center;top:325.39px;font-size:8.5px;line-height:8.5px;color:#555;font-weight:400;">6</div>
<div class="a" style="left:0px;top:367px;width:17px;height:1px;background:#dcdcdc;"></div>
<div class="a t" style="left:-1.60px;width:20px;text-align:center;top:358.39px;font-size:8.5px;line-height:8.5px;color:#555;font-weight:400;">7</div>
<div class="a" style="left:0px;top:399px;width:17px;height:1px;background:#dcdcdc;"></div>
<div class="a t" style="left:-1.60px;width:20px;text-align:center;top:390.39px;font-size:8.5px;line-height:8.5px;color:#555;font-weight:400;">8</div>
<div class="a" style="left:0px;top:431px;width:17px;height:1px;background:#dcdcdc;"></div>
<div class="a t" style="left:-1.60px;width:20px;text-align:center;top:422.39px;font-size:8.5px;line-height:8.5px;color:#555;font-weight:400;">9</div>
<div class="a" style="left:0px;top:464px;width:17px;height:1px;background:#dcdcdc;"></div>
<div class="a t" style="left:-1.60px;width:20px;text-align:center;top:455.39px;font-size:8.5px;line-height:8.5px;color:#555;font-weight:400;">10</div>
<div class="a" style="left:0px;top:496px;width:17px;height:1px;background:#dcdcdc;"></div>
<div class="a t" style="left:-1.60px;width:20px;text-align:center;top:487.39px;font-size:8.5px;line-height:8.5px;color:#555;font-weight:400;">11</div>
<div class="a" style="left:0px;top:529px;width:17px;height:1px;background:#dcdcdc;"></div>
<div class="a t" style="left:-1.60px;width:20px;text-align:center;top:520.39px;font-size:8.5px;line-height:8.5px;color:#555;font-weight:400;">12</div>
<div class="a" style="left:0px;top:561px;width:17px;height:1px;background:#dcdcdc;"></div>
<div class="a t" style="left:-1.60px;width:20px;text-align:center;top:552.39px;font-size:8.5px;line-height:8.5px;color:#555;font-weight:400;">13</div>
<div class="a" style="left:0px;top:593px;width:17px;height:1px;background:#dcdcdc;"></div>
<div class="a t" style="left:-1.60px;width:20px;text-align:center;top:584.39px;font-size:8.5px;line-height:8.5px;color:#555;font-weight:400;">14</div>
<div class="a" style="left:0px;top:626px;width:17px;height:1px;background:#dcdcdc;"></div>
<div class="a t" style="left:-1.60px;width:20px;text-align:center;top:617.39px;font-size:8.5px;line-height:8.5px;color:#555;font-weight:400;">15</div>
<div class="a" style="left:0px;top:658px;width:17px;height:1px;background:#dcdcdc;"></div>
<div class="a t" style="left:-1.60px;width:20px;text-align:center;top:649.39px;font-size:8.5px;line-height:8.5px;color:#555;font-weight:400;">16</div>
<div class="a" style="left:0px;top:691px;width:17px;height:1px;background:#dcdcdc;"></div>
<div class="a t" style="left:-1.60px;width:20px;text-align:center;top:682.39px;font-size:8.5px;line-height:8.5px;color:#555;font-weight:400;">17</div>
<div class="a t" style="left:43.60px;top:154.05px;font-size:18px;line-height:18px;color:#2f6cad;font-weight:400;">Reporting Requirements</div>
<div class="a" style="left:32px;top:181px;width:1193px;height:57px;background:#d9d9d9;"></div>
<div class="a" style="left:32px;top:181px;width:1193px;height:1px;background:#52789f;"></div>
<div class="a" style="left:32px;top:237px;width:1193px;height:1px;background:#52789f;"></div>
<div class="a t" style="left:41.50px;top:205.83px;font-size:9px;line-height:9px;color:#474747;font-weight:700;transform:scaleY(1.16);transform-origin:0 0;">Req #</div>
<div class="a" style="left:61px;top:221px;width:15px;height:15px;background:#fdfdfd;border:1px solid #b8b8b8;box-sizing:border-box;"></div>
<svg class="a" style="left:64.5px;top:226.5px" width="8" height="5" viewBox="0 0 8 5"><path d="M1 0.5 H7 L4 3.8 Z" fill="#555"/></svg>
<div class="a t" style="left:85.60px;top:205.83px;font-size:9px;line-height:9px;color:#474747;font-weight:700;transform:scaleY(1.16);transform-origin:0 0;">Priority</div>
<div class="a" style="left:114px;top:221px;width:15px;height:15px;background:#fdfdfd;border:1px solid #b8b8b8;box-sizing:border-box;"></div>
<svg class="a" style="left:117.5px;top:226.5px" width="8" height="5" viewBox="0 0 8 5"><path d="M1 0.5 H7 L4 3.8 Z" fill="#555"/></svg>
<div class="a t" style="left:137.80px;top:198.73px;font-size:9px;line-height:9px;color:#474747;font-weight:700;transform:scaleY(1.16);transform-origin:0 0;">Report</div>
<div class="a t" style="left:137.80px;top:212.93px;font-size:9px;line-height:9px;color:#474747;font-weight:700;transform:scaleY(1.16);transform-origin:0 0;">Name</div>
<div class="a" style="left:161px;top:221px;width:15px;height:15px;background:#fdfdfd;border:1px solid #b8b8b8;box-sizing:border-box;"></div>
<svg class="a" style="left:164.5px;top:226.5px" width="8" height="5" viewBox="0 0 8 5"><path d="M1 0.5 H7 L4 3.8 Z" fill="#555"/></svg>
<div class="a t" style="left:185.70px;top:198.73px;font-size:9px;line-height:9px;color:#474747;font-weight:700;transform:scaleY(1.16);transform-origin:0 0;">Report</div>
<div class="a t" style="left:185.70px;top:212.93px;font-size:9px;line-height:9px;color:#474747;font-weight:700;transform:scaleY(1.16);transform-origin:0 0;">Type</div>
<div class="a" style="left:209px;top:221px;width:15px;height:15px;background:#fdfdfd;border:1px solid #b8b8b8;box-sizing:border-box;"></div>
<svg class="a" style="left:212.5px;top:226.5px" width="8" height="5" viewBox="0 0 8 5"><path d="M1 0.5 H7 L4 3.8 Z" fill="#555"/></svg>
<div class="a t" style="left:233.50px;top:198.73px;font-size:9px;line-height:9px;color:#474747;font-weight:700;transform:scaleY(1.16);transform-origin:0 0;">Data</div>
<div class="a t" style="left:233.50px;top:212.93px;font-size:9px;line-height:9px;color:#474747;font-weight:700;transform:scaleY(1.16);transform-origin:0 0;">Requirements</div>
<div class="a" style="left:285px;top:221px;width:15px;height:15px;background:#fdfdfd;border:1px solid #b8b8b8;box-sizing:border-box;"></div>
<svg class="a" style="left:288.5px;top:226.5px" width="8" height="5" viewBox="0 0 8 5"><path d="M1 0.5 H7 L4 3.8 Z" fill="#555"/></svg>
<div class="a t" style="left:309.50px;top:198.73px;font-size:9px;line-height:9px;color:#474747;font-weight:700;transform:scaleY(1.16);transform-origin:0 0;">Data</div>
<div class="a t" style="left:309.50px;top:212.93px;font-size:9px;line-height:9px;color:#474747;font-weight:700;transform:scaleY(1.16);transform-origin:0 0;">Source(s)</div>
<div class="a" style="left:350px;top:221px;width:15px;height:15px;background:#fdfdfd;border:1px solid #b8b8b8;box-sizing:border-box;"></div>
<svg class="a" style="left:353.5px;top:226.5px" width="8" height="5" viewBox="0 0 8 5"><path d="M1 0.5 H7 L4 3.8 Z" fill="#555"/></svg>
<div class="a t" style="left:373.80px;top:198.73px;font-size:9px;line-height:9px;color:#474747;font-weight:700;transform:scaleY(1.16);transform-origin:0 0;">Source</div>
<div class="a t" style="left:373.80px;top:212.93px;font-size:9px;line-height:9px;color:#474747;font-weight:700;transform:scaleY(1.16);transform-origin:0 0;">Systems</div>
<div class="a" style="left:397px;top:221px;width:15px;height:15px;background:#fdfdfd;border:1px solid #b8b8b8;box-sizing:border-box;"></div>
<svg class="a" style="left:400.5px;top:226.5px" width="8" height="5" viewBox="0 0 8 5"><path d="M1 0.5 H7 L4 3.8 Z" fill="#555"/></svg>
<div class="a t" style="left:421.60px;top:198.73px;font-size:9px;line-height:9px;color:#474747;font-weight:700;transform:scaleY(1.16);transform-origin:0 0;">Standard/</div>
<div class="a t" style="left:421.60px;top:212.93px;font-size:9px;line-height:9px;color:#474747;font-weight:700;transform:scaleY(1.16);transform-origin:0 0;">Customized</div>
<div class="a" style="left:475px;top:221px;width:15px;height:15px;background:#fdfdfd;border:1px solid #b8b8b8;box-sizing:border-box;"></div>
<svg class="a" style="left:478.5px;top:226.5px" width="8" height="5" viewBox="0 0 8 5"><path d="M1 0.5 H7 L4 3.8 Z" fill="#555"/></svg>
<div class="a t" style="left:498.80px;top:198.73px;font-size:9px;line-height:9px;color:#474747;font-weight:700;transform:scaleY(1.16);transform-origin:0 0;">Process/Sub-</div>
<div class="a t" style="left:498.80px;top:212.93px;font-size:9px;line-height:9px;color:#474747;font-weight:700;transform:scaleY(1.16);transform-origin:0 0;">Process</div>
<div class="a" style="left:547px;top:221px;width:15px;height:15px;background:#fdfdfd;border:1px solid #b8b8b8;box-sizing:border-box;"></div>
<svg class="a" style="left:550.5px;top:226.5px" width="8" height="5" viewBox="0 0 8 5"><path d="M1 0.5 H7 L4 3.8 Z" fill="#555"/></svg>
<div class="a t" style="left:571.60px;top:198.73px;font-size:9px;line-height:9px;color:#474747;font-weight:700;transform:scaleY(1.16);transform-origin:0 0;">Oracle</div>
<div class="a t" style="left:571.60px;top:212.93px;font-size:9px;line-height:9px;color:#474747;font-weight:700;transform:scaleY(1.16);transform-origin:0 0;">Module(s)</div>
<div class="a" style="left:607px;top:221px;width:15px;height:15px;background:#fdfdfd;border:1px solid #b8b8b8;box-sizing:border-box;"></div>
<svg class="a" style="left:610.5px;top:226.5px" width="8" height="5" viewBox="0 0 8 5"><path d="M1 0.5 H7 L4 3.8 Z" fill="#555"/></svg>
<div class="a t" style="left:631.60px;top:205.83px;font-size:9px;line-height:9px;color:#474747;font-weight:700;transform:scaleY(1.16);transform-origin:0 0;">Audience</div>
<div class="a" style="left:661px;top:221px;width:15px;height:15px;background:#fdfdfd;border:1px solid #b8b8b8;box-sizing:border-box;"></div>
<svg class="a" style="left:664.5px;top:226.5px" width="8" height="5" viewBox="0 0 8 5"><path d="M1 0.5 H7 L4 3.8 Z" fill="#555"/></svg>
<div class="a t" style="left:684.70px;top:205.83px;font-size:9px;line-height:9px;color:#474747;font-weight:700;transform:scaleY(1.16);transform-origin:0 0;"># of Users</div>
<div class="a" style="left:722px;top:221px;width:15px;height:15px;background:#fdfdfd;border:1px solid #b8b8b8;box-sizing:border-box;"></div>
<svg class="a" style="left:725.5px;top:226.5px" width="8" height="5" viewBox="0 0 8 5"><path d="M1 0.5 H7 L4 3.8 Z" fill="#555"/></svg>
<div class="a t" style="left:746.60px;top:205.83px;font-size:9px;line-height:9px;color:#474747;font-weight:700;transform:scaleY(1.16);transform-origin:0 0;">Timing</div>
<div class="a" style="left:775px;top:221px;width:15px;height:15px;background:#fdfdfd;border:1px solid #b8b8b8;box-sizing:border-box;"></div>
<svg class="a" style="left:778.5px;top:226.5px" width="8" height="5" viewBox="0 0 8 5"><path d="M1 0.5 H7 L4 3.8 Z" fill="#555"/></svg>
<div class="a t" style="left:799.50px;top:205.83px;font-size:9px;line-height:9px;color:#474747;font-weight:700;transform:scaleY(1.16);transform-origin:0 0;">Frequency</div>
<div class="a" style="left:837px;top:221px;width:15px;height:15px;background:#fdfdfd;border:1px solid #b8b8b8;box-sizing:border-box;"></div>
<svg class="a" style="left:840.5px;top:226.5px" width="8" height="5" viewBox="0 0 8 5"><path d="M1 0.5 H7 L4 3.8 Z" fill="#555"/></svg>
<div class="a t" style="left:861.40px;top:191.63px;font-size:9px;line-height:9px;color:#474747;font-weight:700;transform:scaleY(1.16);transform-origin:0 0;">Data</div>
<div class="a t" style="left:861.40px;top:205.83px;font-size:9px;line-height:9px;color:#474747;font-weight:700;transform:scaleY(1.16);transform-origin:0 0;">Latency/</div>
<div class="a t" style="left:861.40px;top:220.03px;font-size:9px;line-height:9px;color:#474747;font-weight:700;width:53px;overflow:hidden;white-space:nowrap;transform:scaleY(1.16);transform-origin:0 0;">Availabilit</div>
<div class="a" style="left:905px;top:221px;width:15px;height:15px;background:#fdfdfd;border:1px solid #b8b8b8;box-sizing:border-box;"></div>
<svg class="a" style="left:908.5px;top:226.5px" width="8" height="5" viewBox="0 0 8 5"><path d="M1 0.5 H7 L4 3.8 Z" fill="#555"/></svg>
<div class="a t" style="left:929.20px;top:198.73px;font-size:9px;line-height:9px;color:#474747;font-weight:700;transform:scaleY(1.16);transform-origin:0 0;">Data</div>
<div class="a t" style="left:929.20px;top:212.93px;font-size:9px;line-height:9px;color:#474747;font-weight:700;transform:scaleY(1.16);transform-origin:0 0;">Availability</div>
<div class="a" style="left:971px;top:221px;width:15px;height:15px;background:#fdfdfd;border:1px solid #b8b8b8;box-sizing:border-box;"></div>
<svg class="a" style="left:974.5px;top:226.5px" width="8" height="5" viewBox="0 0 8 5"><path d="M1 0.5 H7 L4 3.8 Z" fill="#555"/></svg>
<div class="a t" style="left:995.60px;top:198.73px;font-size:9px;line-height:9px;color:#474747;font-weight:700;transform:scaleY(1.16);transform-origin:0 0;">Existing Report</div>
<div class="a t" style="left:995.60px;top:212.93px;font-size:9px;line-height:9px;color:#474747;font-weight:700;transform:scaleY(1.16);transform-origin:0 0;">Reference</div>
<div class="a" style="left:1076px;top:221px;width:15px;height:15px;background:#fdfdfd;border:1px solid #b8b8b8;box-sizing:border-box;"></div>
<svg class="a" style="left:1079.5px;top:226.5px" width="8" height="5" viewBox="0 0 8 5"><path d="M1 0.5 H7 L4 3.8 Z" fill="#555"/></svg>
<div class="a t" style="left:1100.60px;top:205.83px;font-size:9px;line-height:9px;color:#474747;font-weight:700;transform:scaleY(1.16);transform-origin:0 0;">Issues/Risks</div>
<div class="a" style="left:1143px;top:221px;width:15px;height:15px;background:#fdfdfd;border:1px solid #b8b8b8;box-sizing:border-box;"></div>
<svg class="a" style="left:1146.5px;top:226.5px" width="8" height="5" viewBox="0 0 8 5"><path d="M1 0.5 H7 L4 3.8 Z" fill="#555"/></svg>
<div class="a t" style="left:1166.80px;top:205.83px;font-size:9px;line-height:9px;color:#474747;font-weight:700;transform:scaleY(1.16);transform-origin:0 0;">In-Scope</div>
<div class="a" style="left:1210px;top:221px;width:15px;height:15px;background:#fdfdfd;border:1px solid #b8b8b8;box-sizing:border-box;"></div>
<svg class="a" style="left:1213.5px;top:226.5px" width="8" height="5" viewBox="0 0 8 5"><path d="M1 0.5 H7 L4 3.8 Z" fill="#555"/></svg>
<div class="a" style="left:76px;top:238px;width:52px;height:32px;background:#1f4e79;"></div>
<div class="a" style="left:790px;top:238px;width:62px;height:32px;background:#ffc7ce;"></div>
<div class="a t" style="left:42.20px;top:250.36px;font-size:8px;line-height:8px;color:#000;font-weight:400;letter-spacing:-0.4px-webkit-text-stroke:0.1px currentColor;">101</div>
<div class="a t" style="left:77.00px;width:50px;text-align:center;top:250.36px;font-size:8px;line-height:8px;color:#fff;font-weight:400;">High</div>
<div class="a t" style="left:137.50px;top:244.96px;font-size:8px;line-height:8px;color:#000;font-weight:400;-webkit-text-stroke:0.1px currentColor;">Report</div>
<div class="a t" style="left:137.50px;top:254.76px;font-size:8px;line-height:8px;color:#000;font-weight:400;-webkit-text-stroke:0.1px currentColor;">Name</div>
<div class="a t" style="left:185.50px;top:244.96px;font-size:8px;line-height:8px;color:#000;font-weight:400;-webkit-text-stroke:0.1px currentColor;">Report</div>
<div class="a t" style="left:185.50px;top:254.76px;font-size:8px;line-height:8px;color:#000;font-weight:400;-webkit-text-stroke:0.1px currentColor;">Type</div>
<div class="a t" style="left:233.50px;top:244.96px;font-size:8px;line-height:8px;color:#000;font-weight:400;-webkit-text-stroke:0.1px currentColor;">Data</div>
<div class="a t" style="left:233.50px;top:254.76px;font-size:8px;line-height:8px;color:#000;font-weight:400;-webkit-text-stroke:0.1px currentColor;">Requirements</div>
<div class="a t" style="left:309.50px;top:244.96px;font-size:8px;line-height:8px;color:#000;font-weight:400;-webkit-text-stroke:0.1px currentColor;">Data</div>
<div class="a t" style="left:309.50px;top:254.76px;font-size:8px;line-height:8px;color:#000;font-weight:400;-webkit-text-stroke:0.1px currentColor;">Source(s)</div>
<div class="a t" style="left:373.80px;top:244.96px;font-size:8px;line-height:8px;color:#000;font-weight:400;-webkit-text-stroke:0.1px currentColor;">Source</div>
<div class="a t" style="left:373.80px;top:254.76px;font-size:8px;line-height:8px;color:#000;font-weight:400;-webkit-text-stroke:0.1px currentColor;">Systems</div>
<div class="a t" style="left:421.60px;top:244.96px;font-size:8px;line-height:8px;color:#000;font-weight:400;-webkit-text-stroke:0.1px currentColor;">Standard/Custom</div>
<div class="a t" style="left:421.60px;top:254.76px;font-size:8px;line-height:8px;color:#000;font-weight:400;-webkit-text-stroke:0.1px currentColor;">ized</div>
<div class="a t" style="left:498.80px;top:244.96px;font-size:8px;line-height:8px;color:#000;font-weight:400;-webkit-text-stroke:0.1px currentColor;">Process/Sub-</div>
<div class="a t" style="left:498.80px;top:254.76px;font-size:8px;line-height:8px;color:#000;font-weight:400;-webkit-text-stroke:0.1px currentColor;">Process</div>
<div class="a t" style="left:571.60px;top:244.96px;font-size:8px;line-height:8px;color:#000;font-weight:400;-webkit-text-stroke:0.1px currentColor;">Oracle</div>
<div class="a t" style="left:571.60px;top:254.76px;font-size:8px;line-height:8px;color:#000;font-weight:400;-webkit-text-stroke:0.1px currentColor;">Module(s)</div>
<div class="a t" style="left:631.60px;top:250.36px;font-size:8px;line-height:8px;color:#000;font-weight:400;-webkit-text-stroke:0.1px currentColor;">Audience</div>
<div class="a t" style="left:684.70px;top:250.36px;font-size:8px;line-height:8px;color:#000;font-weight:400;-webkit-text-stroke:0.1px currentColor;"># of Users</div>
<div class="a t" style="left:746.60px;top:250.36px;font-size:8px;line-height:8px;color:#000;font-weight:400;-webkit-text-stroke:0.1px currentColor;">Timing</div>
<div class="a t" style="left:799.80px;top:250.36px;font-size:8px;line-height:8px;color:#9c0006;font-weight:400;-webkit-text-stroke:0.1px currentColor;">Daily</div>
<div class="a t" style="left:861.40px;top:244.96px;font-size:8px;line-height:8px;color:#000;font-weight:400;-webkit-text-stroke:0.1px currentColor;">Data Latency/</div>
<div class="a t" style="left:861.40px;top:254.76px;font-size:8px;line-height:8px;color:#000;font-weight:400;-webkit-text-stroke:0.1px currentColor;">Availability</div>
<div class="a t" style="left:929.20px;top:244.96px;font-size:8px;line-height:8px;color:#000;font-weight:400;-webkit-text-stroke:0.1px currentColor;">Data</div>
<div class="a t" style="left:929.20px;top:254.76px;font-size:8px;line-height:8px;color:#000;font-weight:400;-webkit-text-stroke:0.1px currentColor;">Availability</div>
<div class="a t" style="left:995.60px;top:250.36px;font-size:8px;line-height:8px;color:#000;font-weight:400;-webkit-text-stroke:0.1px currentColor;">Identify Existing Report</div>
<div class="a t" style="left:1100.60px;top:250.36px;font-size:8px;line-height:8px;color:#000;font-weight:400;-webkit-text-stroke:0.1px currentColor;">Issues/Risks</div>
<div class="a t" style="left:1166.80px;top:250.36px;font-size:8px;line-height:8px;color:#000;font-weight:400;-webkit-text-stroke:0.1px currentColor;">In-Scope</div>
<div class="a" style="left:32px;top:270px;width:1193px;height:32px;background:#f2f2f2;"></div>
<div class="a" style="left:76px;top:270px;width:52px;height:32px;background:#2e75b6;"></div>
<div class="a" style="left:790px;top:270px;width:62px;height:32px;background:#ffeb9c;"></div>
<div class="a t" style="left:42.20px;top:283.16px;font-size:8px;line-height:8px;color:#000;font-weight:400;letter-spacing:-0.4px-webkit-text-stroke:0.1px currentColor;">102</div>
<div class="a t" style="left:77.00px;width:50px;text-align:center;top:283.16px;font-size:8px;line-height:8px;color:#fff;font-weight:400;">Med</div>
<div class="a t" style="left:137.50px;top:277.76px;font-size:8px;line-height:8px;color:#000;font-weight:400;-webkit-text-stroke:0.1px currentColor;">Report</div>
<div class="a t" style="left:137.50px;top:287.56px;font-size:8px;line-height:8px;color:#000;font-weight:400;-webkit-text-stroke:0.1px currentColor;">Name</div>
<div class="a t" style="left:185.50px;top:277.76px;font-size:8px;line-height:8px;color:#000;font-weight:400;-webkit-text-stroke:0.1px currentColor;">Report</div>
<div class="a t" style="left:185.50px;top:287.56px;font-size:8px;line-height:8px;color:#000;font-weight:400;-webkit-text-stroke:0.1px currentColor;">Type</div>
<div class="a t" style="left:233.50px;top:277.76px;font-size:8px;line-height:8px;color:#000;font-weight:400;-webkit-text-stroke:0.1px currentColor;">Data</div>
<div class="a t" style="left:233.50px;top:287.56px;font-size:8px;line-height:8px;color:#000;font-weight:400;-webkit-text-stroke:0.1px currentColor;">Requirements</div>
<div class="a t" style="left:309.50px;top:277.76px;font-size:8px;line-height:8px;color:#000;font-weight:400;-webkit-text-stroke:0.1px currentColor;">Data</div>
<div class="a t" style="left:309.50px;top:287.56px;font-size:8px;line-height:8px;color:#000;font-weight:400;-webkit-text-stroke:0.1px currentColor;">Source(s)</div>
<div class="a t" style="left:373.80px;top:277.76px;font-size:8px;line-height:8px;color:#000;font-weight:400;-webkit-text-stroke:0.1px currentColor;">Source</div>
<div class="a t" style="left:373.80px;top:287.56px;font-size:8px;line-height:8px;color:#000;font-weight:400;-webkit-text-stroke:0.1px currentColor;">Systems</div>
<div class="a t" style="left:421.60px;top:277.76px;font-size:8px;line-height:8px;color:#000;font-weight:400;-webkit-text-stroke:0.1px currentColor;">Standard/Custom</div>
<div class="a t" style="left:421.60px;top:287.56px;font-size:8px;line-height:8px;color:#000;font-weight:400;-webkit-text-stroke:0.1px currentColor;">ized</div>
<div class="a t" style="left:498.80px;top:277.76px;font-size:8px;line-height:8px;color:#000;font-weight:400;-webkit-text-stroke:0.1px currentColor;">Process/Sub-</div>
<div class="a t" style="left:498.80px;top:287.56px;font-size:8px;line-height:8px;color:#000;font-weight:400;-webkit-text-stroke:0.1px currentColor;">Process</div>
<div class="a t" style="left:571.60px;top:277.76px;font-size:8px;line-height:8px;color:#000;font-weight:400;-webkit-text-stroke:0.1px currentColor;">Oracle</div>
<div class="a t" style="left:571.60px;top:287.56px;font-size:8px;line-height:8px;color:#000;font-weight:400;-webkit-text-stroke:0.1px currentColor;">Module(s)</div>
<div class="a t" style="left:631.60px;top:283.16px;font-size:8px;line-height:8px;color:#000;font-weight:400;-webkit-text-stroke:0.1px currentColor;">Audience</div>
<div class="a t" style="left:684.70px;top:283.16px;font-size:8px;line-height:8px;color:#000;font-weight:400;-webkit-text-stroke:0.1px currentColor;"># of Users</div>
<div class="a t" style="left:746.60px;top:283.16px;font-size:8px;line-height:8px;color:#000;font-weight:400;-webkit-text-stroke:0.1px currentColor;">Timing</div>
<div class="a t" style="left:799.80px;top:283.16px;font-size:8px;line-height:8px;color:#9c6500;font-weight:400;-webkit-text-stroke:0.1px currentColor;">Weekly</div>
<div class="a t" style="left:861.40px;top:277.76px;font-size:8px;line-height:8px;color:#000;font-weight:400;-webkit-text-stroke:0.1px currentColor;">Data Latency/</div>
<div class="a t" style="left:861.40px;top:287.56px;font-size:8px;line-height:8px;color:#000;font-weight:400;-webkit-text-stroke:0.1px currentColor;">Availability</div>
<div class="a t" style="left:929.20px;top:277.76px;font-size:8px;line-height:8px;color:#000;font-weight:400;-webkit-text-stroke:0.1px currentColor;">Data</div>
<div class="a t" style="left:929.20px;top:287.56px;font-size:8px;line-height:8px;color:#000;font-weight:400;-webkit-text-stroke:0.1px currentColor;">Availability</div>
<div class="a t" style="left:995.60px;top:283.16px;font-size:8px;line-height:8px;color:#000;font-weight:400;-webkit-text-stroke:0.1px currentColor;">Identify Existing Report</div>
<div class="a t" style="left:1100.60px;top:283.16px;font-size:8px;line-height:8px;color:#000;font-weight:400;-webkit-text-stroke:0.1px currentColor;">Issues/Risks</div>
<div class="a t" style="left:1166.80px;top:283.16px;font-size:8px;line-height:8px;color:#000;font-weight:400;-webkit-text-stroke:0.1px currentColor;">Out of Scope</div>
<div class="a" style="left:76px;top:302px;width:52px;height:32px;background:#9dc3e6;"></div>
<div class="a" style="left:790px;top:302px;width:62px;height:32px;background:#c6efce;"></div>
<div class="a t" style="left:42.20px;top:315.16px;font-size:8px;line-height:8px;color:#000;font-weight:400;letter-spacing:-0.4px-webkit-text-stroke:0.1px currentColor;">103</div>
<div class="a t" style="left:77.00px;width:50px;text-align:center;top:315.16px;font-size:8px;line-height:8px;color:#222;font-weight:400;">Low</div>
<div class="a t" style="left:137.50px;top:309.76px;font-size:8px;line-height:8px;color:#000;font-weight:400;-webkit-text-stroke:0.1px currentColor;">Report</div>
<div class="a t" style="left:137.50px;top:319.56px;font-size:8px;line-height:8px;color:#000;font-weight:400;-webkit-text-stroke:0.1px currentColor;">Name</div>
<div class="a t" style="left:185.50px;top:309.76px;font-size:8px;line-height:8px;color:#000;font-weight:400;-webkit-text-stroke:0.1px currentColor;">Report</div>
<div class="a t" style="left:185.50px;top:319.56px;font-size:8px;line-height:8px;color:#000;font-weight:400;-webkit-text-stroke:0.1px currentColor;">Type</div>
<div class="a t" style="left:233.50px;top:309.76px;font-size:8px;line-height:8px;color:#000;font-weight:400;-webkit-text-stroke:0.1px currentColor;">Data</div>
<div class="a t" style="left:233.50px;top:319.56px;font-size:8px;line-height:8px;color:#000;font-weight:400;-webkit-text-stroke:0.1px currentColor;">Requirements</div>
<div class="a t" style="left:309.50px;top:309.76px;font-size:8px;line-height:8px;color:#000;font-weight:400;-webkit-text-stroke:0.1px currentColor;">Data</div>
<div class="a t" style="left:309.50px;top:319.56px;font-size:8px;line-height:8px;color:#000;font-weight:400;-webkit-text-stroke:0.1px currentColor;">Source(s)</div>
<div class="a t" style="left:373.80px;top:309.76px;font-size:8px;line-height:8px;color:#000;font-weight:400;-webkit-text-stroke:0.1px currentColor;">Source</div>
<div class="a t" style="left:373.80px;top:319.56px;font-size:8px;line-height:8px;color:#000;font-weight:400;-webkit-text-stroke:0.1px currentColor;">Systems</div>
<div class="a t" style="left:421.60px;top:309.76px;font-size:8px;line-height:8px;color:#000;font-weight:400;-webkit-text-stroke:0.1px currentColor;">Standard/Custom</div>
<div class="a t" style="left:421.60px;top:319.56px;font-size:8px;line-height:8px;color:#000;font-weight:400;-webkit-text-stroke:0.1px currentColor;">ized</div>
<div class="a t" style="left:498.80px;top:309.76px;font-size:8px;line-height:8px;color:#000;font-weight:400;-webkit-text-stroke:0.1px currentColor;">Process/Sub-</div>
<div class="a t" style="left:498.80px;top:319.56px;font-size:8px;line-height:8px;color:#000;font-weight:400;-webkit-text-stroke:0.1px currentColor;">Process</div>
<div class="a t" style="left:571.60px;top:309.76px;font-size:8px;line-height:8px;color:#000;font-weight:400;-webkit-text-stroke:0.1px currentColor;">Oracle</div>
<div class="a t" style="left:571.60px;top:319.56px;font-size:8px;line-height:8px;color:#000;font-weight:400;-webkit-text-stroke:0.1px currentColor;">Module(s)</div>
<div class="a t" style="left:631.60px;top:315.16px;font-size:8px;line-height:8px;color:#000;font-weight:400;-webkit-text-stroke:0.1px currentColor;">Audience</div>
<div class="a t" style="left:684.70px;top:315.16px;font-size:8px;line-height:8px;color:#000;font-weight:400;-webkit-text-stroke:0.1px currentColor;"># of Users</div>
<div class="a t" style="left:746.60px;top:315.16px;font-size:8px;line-height:8px;color:#000;font-weight:400;-webkit-text-stroke:0.1px currentColor;">Timing</div>
<div class="a t" style="left:799.80px;top:315.16px;font-size:8px;line-height:8px;color:#006100;font-weight:400;-webkit-text-stroke:0.1px currentColor;">Monthly</div>
<div class="a t" style="left:861.40px;top:309.76px;font-size:8px;line-height:8px;color:#000;font-weight:400;-webkit-text-stroke:0.1px currentColor;">Data Latency/</div>
<div class="a t" style="left:861.40px;top:319.56px;font-size:8px;line-height:8px;color:#000;font-weight:400;-webkit-text-stroke:0.1px currentColor;">Availability</div>
<div class="a t" style="left:929.20px;top:309.76px;font-size:8px;line-height:8px;color:#000;font-weight:400;-webkit-text-stroke:0.1px currentColor;">Data</div>
<div class="a t" style="left:929.20px;top:319.56px;font-size:8px;line-height:8px;color:#000;font-weight:400;-webkit-text-stroke:0.1px currentColor;">Availability</div>
<div class="a t" style="left:995.60px;top:315.16px;font-size:8px;line-height:8px;color:#000;font-weight:400;-webkit-text-stroke:0.1px currentColor;">Identify Existing Report</div>
<div class="a t" style="left:1100.60px;top:315.16px;font-size:8px;line-height:8px;color:#000;font-weight:400;-webkit-text-stroke:0.1px currentColor;">Issues/Risks</div>
<div class="a t" style="left:1166.80px;top:315.16px;font-size:8px;line-height:8px;color:#000;font-weight:400;-webkit-text-stroke:0.1px currentColor;">In-Scope</div>
<div class="a" style="left:32px;top:334px;width:1193px;height:33px;background:#f2f2f2;"></div>
<div class="a" style="left:76px;top:334px;width:52px;height:33px;background:#1f4e79;"></div>
<div class="a t" style="left:42.20px;top:347.16px;font-size:8px;line-height:8px;color:#000;font-weight:400;letter-spacing:-0.4px-webkit-text-stroke:0.1px currentColor;">104</div>
<div class="a t" style="left:77.00px;width:50px;text-align:center;top:347.16px;font-size:8px;line-height:8px;color:#fff;font-weight:400;">High</div>
<div class="a t" style="left:137.50px;top:341.76px;font-size:8px;line-height:8px;color:#000;font-weight:400;-webkit-text-stroke:0.1px currentColor;">Report</div>
<div class="a t" style="left:137.50px;top:351.56px;font-size:8px;line-height:8px;color:#000;font-weight:400;-webkit-text-stroke:0.1px currentColor;">Name</div>
<div class="a t" style="left:185.50px;top:341.76px;font-size:8px;line-height:8px;color:#000;font-weight:400;-webkit-text-stroke:0.1px currentColor;">Report</div>
<div class="a t" style="left:185.50px;top:351.56px;font-size:8px;line-height:8px;color:#000;font-weight:400;-webkit-text-stroke:0.1px currentColor;">Type</div>
<div class="a t" style="left:233.50px;top:341.76px;font-size:8px;line-height:8px;color:#000;font-weight:400;-webkit-text-stroke:0.1px currentColor;">Data</div>
<div class="a t" style="left:233.50px;top:351.56px;font-size:8px;line-height:8px;color:#000;font-weight:400;-webkit-text-stroke:0.1px currentColor;">Requirements</div>
<div class="a t" style="left:309.50px;top:341.76px;font-size:8px;line-height:8px;color:#000;font-weight:400;-webkit-text-stroke:0.1px currentColor;">Data</div>
<div class="a t" style="left:309.50px;top:351.56px;font-size:8px;line-height:8px;color:#000;font-weight:400;-webkit-text-stroke:0.1px currentColor;">Source(s)</div>
<div class="a t" style="left:373.80px;top:341.76px;font-size:8px;line-height:8px;color:#000;font-weight:400;-webkit-text-stroke:0.1px currentColor;">Source</div>
<div class="a t" style="left:373.80px;top:351.56px;font-size:8px;line-height:8px;color:#000;font-weight:400;-webkit-text-stroke:0.1px currentColor;">Systems</div>
<div class="a t" style="left:421.60px;top:341.76px;font-size:8px;line-height:8px;color:#000;font-weight:400;-webkit-text-stroke:0.1px currentColor;">Standard/Custom</div>
<div class="a t" style="left:421.60px;top:351.56px;font-size:8px;line-height:8px;color:#000;font-weight:400;-webkit-text-stroke:0.1px currentColor;">ized</div>
<div class="a t" style="left:498.80px;top:341.76px;font-size:8px;line-height:8px;color:#000;font-weight:400;-webkit-text-stroke:0.1px currentColor;">Process/Sub-</div>
<div class="a t" style="left:498.80px;top:351.56px;font-size:8px;line-height:8px;color:#000;font-weight:400;-webkit-text-stroke:0.1px currentColor;">Process</div>
<div class="a t" style="left:571.60px;top:341.76px;font-size:8px;line-height:8px;color:#000;font-weight:400;-webkit-text-stroke:0.1px currentColor;">Oracle</div>
<div class="a t" style="left:571.60px;top:351.56px;font-size:8px;line-height:8px;color:#000;font-weight:400;-webkit-text-stroke:0.1px currentColor;">Module(s)</div>
<div class="a t" style="left:631.60px;top:347.16px;font-size:8px;line-height:8px;color:#000;font-weight:400;-webkit-text-stroke:0.1px currentColor;">Audience</div>
<div class="a t" style="left:684.70px;top:347.16px;font-size:8px;line-height:8px;color:#000;font-weight:400;-webkit-text-stroke:0.1px currentColor;"># of Users</div>
<div class="a t" style="left:746.60px;top:347.16px;font-size:8px;line-height:8px;color:#000;font-weight:400;-webkit-text-stroke:0.1px currentColor;">Timing</div>
<div class="a t" style="left:799.80px;top:347.16px;font-size:8px;line-height:8px;color:#111;font-weight:400;-webkit-text-stroke:0.1px currentColor;">Annual</div>
<div class="a t" style="left:861.40px;top:341.76px;font-size:8px;line-height:8px;color:#000;font-weight:400;-webkit-text-stroke:0.1px currentColor;">Data Latency/</div>
<div class="a t" style="left:861.40px;top:351.56px;font-size:8px;line-height:8px;color:#000;font-weight:400;-webkit-text-stroke:0.1px currentColor;">Availability</div>
<div class="a t" style="left:929.20px;top:341.76px;font-size:8px;line-height:8px;color:#000;font-weight:400;-webkit-text-stroke:0.1px currentColor;">Data</div>
<div class="a t" style="left:929.20px;top:351.56px;font-size:8px;line-height:8px;color:#000;font-weight:400;-webkit-text-stroke:0.1px currentColor;">Availability</div>
<div class="a t" style="left:995.60px;top:347.16px;font-size:8px;line-height:8px;color:#000;font-weight:400;-webkit-text-stroke:0.1px currentColor;">Identify Existing Report</div>
<div class="a t" style="left:1100.60px;top:347.16px;font-size:8px;line-height:8px;color:#000;font-weight:400;-webkit-text-stroke:0.1px currentColor;">Issues/Risks</div>
<div class="a t" style="left:1166.80px;top:347.16px;font-size:8px;line-height:8px;color:#000;font-weight:400;-webkit-text-stroke:0.1px currentColor;">Out of Scope</div>
<div class="a" style="left:76px;top:367px;width:52px;height:32px;background:#2e75b6;"></div>
<div class="a" style="left:790px;top:367px;width:62px;height:32px;background:#ffc7ce;"></div>
<div class="a t" style="left:42.20px;top:380.16px;font-size:8px;line-height:8px;color:#000;font-weight:400;letter-spacing:-0.4px-webkit-text-stroke:0.1px currentColor;">105</div>
<div class="a t" style="left:77.00px;width:50px;text-align:center;top:380.16px;font-size:8px;line-height:8px;color:#fff;font-weight:400;">Med</div>
<div class="a t" style="left:137.50px;top:374.76px;font-size:8px;line-height:8px;color:#000;font-weight:400;-webkit-text-stroke:0.1px currentColor;">Report</div>
<div class="a t" style="left:137.50px;top:384.56px;font-size:8px;line-height:8px;color:#000;font-weight:400;-webkit-text-stroke:0.1px currentColor;">Name</div>
<div class="a t" style="left:185.50px;top:374.76px;font-size:8px;line-height:8px;color:#000;font-weight:400;-webkit-text-stroke:0.1px currentColor;">Report</div>
<div class="a t" style="left:185.50px;top:384.56px;font-size:8px;line-height:8px;color:#000;font-weight:400;-webkit-text-stroke:0.1px currentColor;">Type</div>
<div class="a t" style="left:233.50px;top:374.76px;font-size:8px;line-height:8px;color:#000;font-weight:400;-webkit-text-stroke:0.1px currentColor;">Data</div>
<div class="a t" style="left:233.50px;top:384.56px;font-size:8px;line-height:8px;color:#000;font-weight:400;-webkit-text-stroke:0.1px currentColor;">Requirements</div>
<div class="a t" style="left:309.50px;top:374.76px;font-size:8px;line-height:8px;color:#000;font-weight:400;-webkit-text-stroke:0.1px currentColor;">Data</div>
<div class="a t" style="left:309.50px;top:384.56px;font-size:8px;line-height:8px;color:#000;font-weight:400;-webkit-text-stroke:0.1px currentColor;">Source(s)</div>
<div class="a t" style="left:373.80px;top:374.76px;font-size:8px;line-height:8px;color:#000;font-weight:400;-webkit-text-stroke:0.1px currentColor;">Source</div>
<div class="a t" style="left:373.80px;top:384.56px;font-size:8px;line-height:8px;color:#000;font-weight:400;-webkit-text-stroke:0.1px currentColor;">Systems</div>
<div class="a t" style="left:421.60px;top:374.76px;font-size:8px;line-height:8px;color:#000;font-weight:400;-webkit-text-stroke:0.1px currentColor;">Standard/Custom</div>
<div class="a t" style="left:421.60px;top:384.56px;font-size:8px;line-height:8px;color:#000;font-weight:400;-webkit-text-stroke:0.1px currentColor;">ized</div>
<div class="a t" style="left:498.80px;top:374.76px;font-size:8px;line-height:8px;color:#000;font-weight:400;-webkit-text-stroke:0.1px currentColor;">Process/Sub-</div>
<div class="a t" style="left:498.80px;top:384.56px;font-size:8px;line-height:8px;color:#000;font-weight:400;-webkit-text-stroke:0.1px currentColor;">Process</div>
<div class="a t" style="left:571.60px;top:374.76px;font-size:8px;line-height:8px;color:#000;font-weight:400;-webkit-text-stroke:0.1px currentColor;">Oracle</div>
<div class="a t" style="left:571.60px;top:384.56px;font-size:8px;line-height:8px;color:#000;font-weight:400;-webkit-text-stroke:0.1px currentColor;">Module(s)</div>
<div class="a t" style="left:631.60px;top:380.16px;font-size:8px;line-height:8px;color:#000;font-weight:400;-webkit-text-stroke:0.1px currentColor;">Audience</div>
<div class="a t" style="left:684.70px;top:380.16px;font-size:8px;line-height:8px;color:#000;font-weight:400;-webkit-text-stroke:0.1px currentColor;"># of Users</div>
<div class="a t" style="left:746.60px;top:380.16px;font-size:8px;line-height:8px;color:#000;font-weight:400;-webkit-text-stroke:0.1px currentColor;">Timing</div>
<div class="a t" style="left:799.80px;top:380.16px;font-size:8px;line-height:8px;color:#9c0006;font-weight:400;-webkit-text-stroke:0.1px currentColor;">Daily</div>
<div class="a t" style="left:861.40px;top:374.76px;font-size:8px;line-height:8px;color:#000;font-weight:400;-webkit-text-stroke:0.1px currentColor;">Data Latency/</div>
<div class="a t" style="left:861.40px;top:384.56px;font-size:8px;line-height:8px;color:#000;font-weight:400;-webkit-text-stroke:0.1px currentColor;">Availability</div>
<div class="a t" style="left:929.20px;top:374.76px;font-size:8px;line-height:8px;color:#000;font-weight:400;-webkit-text-stroke:0.1px currentColor;">Data</div>
<div class="a t" style="left:929.20px;top:384.56px;font-size:8px;line-height:8px;color:#000;font-weight:400;-webkit-text-stroke:0.1px currentColor;">Availability</div>
<div class="a t" style="left:995.60px;top:380.16px;font-size:8px;line-height:8px;color:#000;font-weight:400;-webkit-text-stroke:0.1px currentColor;">Identify Existing Report</div>
<div class="a t" style="left:1100.60px;top:380.16px;font-size:8px;line-height:8px;color:#000;font-weight:400;-webkit-text-stroke:0.1px currentColor;">Issues/Risks</div>
<div class="a t" style="left:1166.80px;top:380.16px;font-size:8px;line-height:8px;color:#000;font-weight:400;-webkit-text-stroke:0.1px currentColor;">In-Scope</div>
<div class="a" style="left:32px;top:399px;width:1193px;height:32px;background:#f2f2f2;"></div>
<div class="a" style="left:76px;top:399px;width:52px;height:32px;background:#9dc3e6;"></div>
<div class="a" style="left:790px;top:399px;width:62px;height:32px;background:#ffeb9c;"></div>
<div class="a t" style="left:42.20px;top:412.16px;font-size:8px;line-height:8px;color:#000;font-weight:400;letter-spacing:-0.4px-webkit-text-stroke:0.1px currentColor;">106</div>
<div class="a t" style="left:77.00px;width:50px;text-align:center;top:412.16px;font-size:8px;line-height:8px;color:#222;font-weight:400;">Low</div>
<div class="a t" style="left:137.50px;top:406.76px;font-size:8px;line-height:8px;color:#000;font-weight:400;-webkit-text-stroke:0.1px currentColor;">Report</div>
<div class="a t" style="left:137.50px;top:416.56px;font-size:8px;line-height:8px;color:#000;font-weight:400;-webkit-text-stroke:0.1px currentColor;">Name</div>
<div class="a t" style="left:185.50px;top:406.76px;font-size:8px;line-height:8px;color:#000;font-weight:400;-webkit-text-stroke:0.1px currentColor;">Report</div>
<div class="a t" style="left:185.50px;top:416.56px;font-size:8px;line-height:8px;color:#000;font-weight:400;-webkit-text-stroke:0.1px currentColor;">Type</div>
<div class="a t" style="left:233.50px;top:406.76px;font-size:8px;line-height:8px;color:#000;font-weight:400;-webkit-text-stroke:0.1px currentColor;">Data</div>
<div class="a t" style="left:233.50px;top:416.56px;font-size:8px;line-height:8px;color:#000;font-weight:400;-webkit-text-stroke:0.1px currentColor;">Requirements</div>
<div class="a t" style="left:309.50px;top:406.76px;font-size:8px;line-height:8px;color:#000;font-weight:400;-webkit-text-stroke:0.1px currentColor;">Data</div>
<div class="a t" style="left:309.50px;top:416.56px;font-size:8px;line-height:8px;color:#000;font-weight:400;-webkit-text-stroke:0.1px currentColor;">Source(s)</div>
<div class="a t" style="left:373.80px;top:406.76px;font-size:8px;line-height:8px;color:#000;font-weight:400;-webkit-text-stroke:0.1px currentColor;">Source</div>
<div class="a t" style="left:373.80px;top:416.56px;font-size:8px;line-height:8px;color:#000;font-weight:400;-webkit-text-stroke:0.1px currentColor;">Systems</div>
<div class="a t" style="left:421.60px;top:406.76px;font-size:8px;line-height:8px;color:#000;font-weight:400;-webkit-text-stroke:0.1px currentColor;">Standard/Custom</div>
<div class="a t" style="left:421.60px;top:416.56px;font-size:8px;line-height:8px;color:#000;font-weight:400;-webkit-text-stroke:0.1px currentColor;">ized</div>
<div class="a t" style="left:498.80px;top:406.76px;font-size:8px;line-height:8px;color:#000;font-weight:400;-webkit-text-stroke:0.1px currentColor;">Process/Sub-</div>
<div class="a t" style="left:498.80px;top:416.56px;font-size:8px;line-height:8px;color:#000;font-weight:400;-webkit-text-stroke:0.1px currentColor;">Process</div>
<div class="a t" style="left:571.60px;top:406.76px;font-size:8px;line-height:8px;color:#000;font-weight:400;-webkit-text-stroke:0.1px currentColor;">Oracle</div>
<div class="a t" style="left:571.60px;top:416.56px;font-size:8px;line-height:8px;color:#000;font-weight:400;-webkit-text-stroke:0.1px currentColor;">Module(s)</div>
<div class="a t" style="left:631.60px;top:412.16px;font-size:8px;line-height:8px;color:#000;font-weight:400;-webkit-text-stroke:0.1px currentColor;">Audience</div>
<div class="a t" style="left:684.70px;top:412.16px;font-size:8px;line-height:8px;color:#000;font-weight:400;-webkit-text-stroke:0.1px currentColor;"># of Users</div>
<div class="a t" style="left:746.60px;top:412.16px;font-size:8px;line-height:8px;color:#000;font-weight:400;-webkit-text-stroke:0.1px currentColor;">Timing</div>
<div class="a t" style="left:799.80px;top:412.16px;font-size:8px;line-height:8px;color:#9c6500;font-weight:400;-webkit-text-stroke:0.1px currentColor;">Weekly</div>
<div class="a t" style="left:861.40px;top:406.76px;font-size:8px;line-height:8px;color:#000;font-weight:400;-webkit-text-stroke:0.1px currentColor;">Data Latency/</div>
<div class="a t" style="left:861.40px;top:416.56px;font-size:8px;line-height:8px;color:#000;font-weight:400;-webkit-text-stroke:0.1px currentColor;">Availability</div>
<div class="a t" style="left:929.20px;top:406.76px;font-size:8px;line-height:8px;color:#000;font-weight:400;-webkit-text-stroke:0.1px currentColor;">Data</div>
<div class="a t" style="left:929.20px;top:416.56px;font-size:8px;line-height:8px;color:#000;font-weight:400;-webkit-text-stroke:0.1px currentColor;">Availability</div>
<div class="a t" style="left:995.60px;top:412.16px;font-size:8px;line-height:8px;color:#000;font-weight:400;-webkit-text-stroke:0.1px currentColor;">Identify Existing Report</div>
<div class="a t" style="left:1100.60px;top:412.16px;font-size:8px;line-height:8px;color:#000;font-weight:400;-webkit-text-stroke:0.1px currentColor;">Issues/Risks</div>
<div class="a t" style="left:1166.80px;top:412.16px;font-size:8px;line-height:8px;color:#000;font-weight:400;-webkit-text-stroke:0.1px currentColor;">Out of Scope</div>
<div class="a" style="left:76px;top:431px;width:52px;height:33px;background:#1f4e79;"></div>
<div class="a" style="left:790px;top:431px;width:62px;height:33px;background:#c6efce;"></div>
<div class="a t" style="left:42.20px;top:444.16px;font-size:8px;line-height:8px;color:#000;font-weight:400;letter-spacing:-0.4px-webkit-text-stroke:0.1px currentColor;">107</div>
<div class="a t" style="left:77.00px;width:50px;text-align:center;top:444.16px;font-size:8px;line-height:8px;color:#fff;font-weight:400;">High</div>
<div class="a t" style="left:137.50px;top:438.76px;font-size:8px;line-height:8px;color:#000;font-weight:400;-webkit-text-stroke:0.1px currentColor;">Report</div>
<div class="a t" style="left:137.50px;top:448.56px;font-size:8px;line-height:8px;color:#000;font-weight:400;-webkit-text-stroke:0.1px currentColor;">Name</div>
<div class="a t" style="left:185.50px;top:438.76px;font-size:8px;line-height:8px;color:#000;font-weight:400;-webkit-text-stroke:0.1px currentColor;">Report</div>
<div class="a t" style="left:185.50px;top:448.56px;font-size:8px;line-height:8px;color:#000;font-weight:400;-webkit-text-stroke:0.1px currentColor;">Type</div>
<div class="a t" style="left:233.50px;top:438.76px;font-size:8px;line-height:8px;color:#000;font-weight:400;-webkit-text-stroke:0.1px currentColor;">Data</div>
<div class="a t" style="left:233.50px;top:448.56px;font-size:8px;line-height:8px;color:#000;font-weight:400;-webkit-text-stroke:0.1px currentColor;">Requirements</div>
<div class="a t" style="left:309.50px;top:438.76px;font-size:8px;line-height:8px;color:#000;font-weight:400;-webkit-text-stroke:0.1px currentColor;">Data</div>
<div class="a t" style="left:309.50px;top:448.56px;font-size:8px;line-height:8px;color:#000;font-weight:400;-webkit-text-stroke:0.1px currentColor;">Source(s)</div>
<div class="a t" style="left:373.80px;top:438.76px;font-size:8px;line-height:8px;color:#000;font-weight:400;-webkit-text-stroke:0.1px currentColor;">Source</div>
<div class="a t" style="left:373.80px;top:448.56px;font-size:8px;line-height:8px;color:#000;font-weight:400;-webkit-text-stroke:0.1px currentColor;">Systems</div>
<div class="a t" style="left:421.60px;top:438.76px;font-size:8px;line-height:8px;color:#000;font-weight:400;-webkit-text-stroke:0.1px currentColor;">Standard/Custom</div>
<div class="a t" style="left:421.60px;top:448.56px;font-size:8px;line-height:8px;color:#000;font-weight:400;-webkit-text-stroke:0.1px currentColor;">ized</div>
<div class="a t" style="left:498.80px;top:438.76px;font-size:8px;line-height:8px;color:#000;font-weight:400;-webkit-text-stroke:0.1px currentColor;">Process/Sub-</div>
<div class="a t" style="left:498.80px;top:448.56px;font-size:8px;line-height:8px;color:#000;font-weight:400;-webkit-text-stroke:0.1px currentColor;">Process</div>
<div class="a t" style="left:571.60px;top:438.76px;font-size:8px;line-height:8px;color:#000;font-weight:400;-webkit-text-stroke:0.1px currentColor;">Oracle</div>
<div class="a t" style="left:571.60px;top:448.56px;font-size:8px;line-height:8px;color:#000;font-weight:400;-webkit-text-stroke:0.1px currentColor;">Module(s)</div>
<div class="a t" style="left:631.60px;top:444.16px;font-size:8px;line-height:8px;color:#000;font-weight:400;-webkit-text-stroke:0.1px currentColor;">Audience</div>
<div class="a t" style="left:684.70px;top:444.16px;font-size:8px;line-height:8px;color:#000;font-weight:400;-webkit-text-stroke:0.1px currentColor;"># of Users</div>
<div class="a t" style="left:746.60px;top:444.16px;font-size:8px;line-height:8px;color:#000;font-weight:400;-webkit-text-stroke:0.1px currentColor;">Timing</div>
<div class="a t" style="left:799.80px;top:444.16px;font-size:8px;line-height:8px;color:#006100;font-weight:400;-webkit-text-stroke:0.1px currentColor;">Monthly</div>
<div class="a t" style="left:861.40px;top:438.76px;font-size:8px;line-height:8px;color:#000;font-weight:400;-webkit-text-stroke:0.1px currentColor;">Data Latency/</div>
<div class="a t" style="left:861.40px;top:448.56px;font-size:8px;line-height:8px;color:#000;font-weight:400;-webkit-text-stroke:0.1px currentColor;">Availability</div>
<div class="a t" style="left:929.20px;top:438.76px;font-size:8px;line-height:8px;color:#000;font-weight:400;-webkit-text-stroke:0.1px currentColor;">Data</div>
<div class="a t" style="left:929.20px;top:448.56px;font-size:8px;line-height:8px;color:#000;font-weight:400;-webkit-text-stroke:0.1px currentColor;">Availability</div>
<div class="a t" style="left:995.60px;top:444.16px;font-size:8px;line-height:8px;color:#000;font-weight:400;-webkit-text-stroke:0.1px currentColor;">Identify Existing Report</div>
<div class="a t" style="left:1100.60px;top:444.16px;font-size:8px;line-height:8px;color:#000;font-weight:400;-webkit-text-stroke:0.1px currentColor;">Issues/Risks</div>
<div class="a t" style="left:1166.80px;top:444.16px;font-size:8px;line-height:8px;color:#000;font-weight:400;-webkit-text-stroke:0.1px currentColor;">In-Scope</div>
<div class="a" style="left:32px;top:464px;width:1193px;height:32px;background:#f2f2f2;"></div>
<div class="a" style="left:76px;top:464px;width:52px;height:32px;background:#2e75b6;"></div>
<div class="a t" style="left:42.20px;top:477.16px;font-size:8px;line-height:8px;color:#000;font-weight:400;letter-spacing:-0.4px-webkit-text-stroke:0.1px currentColor;">108</div>
<div class="a t" style="left:77.00px;width:50px;text-align:center;top:477.16px;font-size:8px;line-height:8px;color:#fff;font-weight:400;">Med</div>
<div class="a t" style="left:137.50px;top:471.76px;font-size:8px;line-height:8px;color:#000;font-weight:400;-webkit-text-stroke:0.1px currentColor;">Report</div>
<div class="a t" style="left:137.50px;top:481.56px;font-size:8px;line-height:8px;color:#000;font-weight:400;-webkit-text-stroke:0.1px currentColor;">Name</div>
<div class="a t" style="left:185.50px;top:471.76px;font-size:8px;line-height:8px;color:#000;font-weight:400;-webkit-text-stroke:0.1px currentColor;">Report</div>
<div class="a t" style="left:185.50px;top:481.56px;font-size:8px;line-height:8px;color:#000;font-weight:400;-webkit-text-stroke:0.1px currentColor;">Type</div>
<div class="a t" style="left:233.50px;top:471.76px;font-size:8px;line-height:8px;color:#000;font-weight:400;-webkit-text-stroke:0.1px currentColor;">Data</div>
<div class="a t" style="left:233.50px;top:481.56px;font-size:8px;line-height:8px;color:#000;font-weight:400;-webkit-text-stroke:0.1px currentColor;">Requirements</div>
<div class="a t" style="left:309.50px;top:471.76px;font-size:8px;line-height:8px;color:#000;font-weight:400;-webkit-text-stroke:0.1px currentColor;">Data</div>
<div class="a t" style="left:309.50px;top:481.56px;font-size:8px;line-height:8px;color:#000;font-weight:400;-webkit-text-stroke:0.1px currentColor;">Source(s)</div>
<div class="a t" style="left:373.80px;top:471.76px;font-size:8px;line-height:8px;color:#000;font-weight:400;-webkit-text-stroke:0.1px currentColor;">Source</div>
<div class="a t" style="left:373.80px;top:481.56px;font-size:8px;line-height:8px;color:#000;font-weight:400;-webkit-text-stroke:0.1px currentColor;">Systems</div>
<div class="a t" style="left:421.60px;top:471.76px;font-size:8px;line-height:8px;color:#000;font-weight:400;-webkit-text-stroke:0.1px currentColor;">Standard/Custom</div>
<div class="a t" style="left:421.60px;top:481.56px;font-size:8px;line-height:8px;color:#000;font-weight:400;-webkit-text-stroke:0.1px currentColor;">ized</div>
<div class="a t" style="left:498.80px;top:471.76px;font-size:8px;line-height:8px;color:#000;font-weight:400;-webkit-text-stroke:0.1px currentColor;">Process/Sub-</div>
<div class="a t" style="left:498.80px;top:481.56px;font-size:8px;line-height:8px;color:#000;font-weight:400;-webkit-text-stroke:0.1px currentColor;">Process</div>
<div class="a t" style="left:571.60px;top:471.76px;font-size:8px;line-height:8px;color:#000;font-weight:400;-webkit-text-stroke:0.1px currentColor;">Oracle</div>
<div class="a t" style="left:571.60px;top:481.56px;font-size:8px;line-height:8px;color:#000;font-weight:400;-webkit-text-stroke:0.1px currentColor;">Module(s)</div>
<div class="a t" style="left:631.60px;top:477.16px;font-size:8px;line-height:8px;color:#000;font-weight:400;-webkit-text-stroke:0.1px currentColor;">Audience</div>
<div class="a t" style="left:684.70px;top:477.16px;font-size:8px;line-height:8px;color:#000;font-weight:400;-webkit-text-stroke:0.1px currentColor;"># of Users</div>
<div class="a t" style="left:746.60px;top:477.16px;font-size:8px;line-height:8px;color:#000;font-weight:400;-webkit-text-stroke:0.1px currentColor;">Timing</div>
<div class="a t" style="left:799.80px;top:477.16px;font-size:8px;line-height:8px;color:#111;font-weight:400;-webkit-text-stroke:0.1px currentColor;">Annual</div>
<div class="a t" style="left:861.40px;top:471.76px;font-size:8px;line-height:8px;color:#000;font-weight:400;-webkit-text-stroke:0.1px currentColor;">Data Latency/</div>
<div class="a t" style="left:861.40px;top:481.56px;font-size:8px;line-height:8px;color:#000;font-weight:400;-webkit-text-stroke:0.1px currentColor;">Availability</div>
<div class="a t" style="left:929.20px;top:471.76px;font-size:8px;line-height:8px;color:#000;font-weight:400;-webkit-text-stroke:0.1px currentColor;">Data</div>
<div class="a t" style="left:929.20px;top:481.56px;font-size:8px;line-height:8px;color:#000;font-weight:400;-webkit-text-stroke:0.1px currentColor;">Availability</div>
<div class="a t" style="left:995.60px;top:477.16px;font-size:8px;line-height:8px;color:#000;font-weight:400;-webkit-text-stroke:0.1px currentColor;">Identify Existing Report</div>
<div class="a t" style="left:1100.60px;top:477.16px;font-size:8px;line-height:8px;color:#000;font-weight:400;-webkit-text-stroke:0.1px currentColor;">Issues/Risks</div>
<div class="a t" style="left:1166.80px;top:477.16px;font-size:8px;line-height:8px;color:#000;font-weight:400;-webkit-text-stroke:0.1px currentColor;">Out of Scope</div>
<div class="a" style="left:76px;top:496px;width:52px;height:33px;background:#9dc3e6;"></div>
<div class="a" style="left:790px;top:496px;width:62px;height:33px;background:#ffc7ce;"></div>
<div class="a t" style="left:42.20px;top:509.16px;font-size:8px;line-height:8px;color:#000;font-weight:400;letter-spacing:-0.4px-webkit-text-stroke:0.1px currentColor;">109</div>
<div class="a t" style="left:77.00px;width:50px;text-align:center;top:509.16px;font-size:8px;line-height:8px;color:#222;font-weight:400;">Low</div>
<div class="a t" style="left:137.50px;top:503.76px;font-size:8px;line-height:8px;color:#000;font-weight:400;-webkit-text-stroke:0.1px currentColor;">Report</div>
<div class="a t" style="left:137.50px;top:513.56px;font-size:8px;line-height:8px;color:#000;font-weight:400;-webkit-text-stroke:0.1px currentColor;">Name</div>
<div class="a t" style="left:185.50px;top:503.76px;font-size:8px;line-height:8px;color:#000;font-weight:400;-webkit-text-stroke:0.1px currentColor;">Report</div>
<div class="a t" style="left:185.50px;top:513.56px;font-size:8px;line-height:8px;color:#000;font-weight:400;-webkit-text-stroke:0.1px currentColor;">Type</div>
<div class="a t" style="left:233.50px;top:503.76px;font-size:8px;line-height:8px;color:#000;font-weight:400;-webkit-text-stroke:0.1px currentColor;">Data</div>
<div class="a t" style="left:233.50px;top:513.56px;font-size:8px;line-height:8px;color:#000;font-weight:400;-webkit-text-stroke:0.1px currentColor;">Requirements</div>
<div class="a t" style="left:309.50px;top:503.76px;font-size:8px;line-height:8px;color:#000;font-weight:400;-webkit-text-stroke:0.1px currentColor;">Data</div>
<div class="a t" style="left:309.50px;top:513.56px;font-size:8px;line-height:8px;color:#000;font-weight:400;-webkit-text-stroke:0.1px currentColor;">Source(s)</div>
<div class="a t" style="left:373.80px;top:503.76px;font-size:8px;line-height:8px;color:#000;font-weight:400;-webkit-text-stroke:0.1px currentColor;">Source</div>
<div class="a t" style="left:373.80px;top:513.56px;font-size:8px;line-height:8px;color:#000;font-weight:400;-webkit-text-stroke:0.1px currentColor;">Systems</div>
<div class="a t" style="left:421.60px;top:503.76px;font-size:8px;line-height:8px;color:#000;font-weight:400;-webkit-text-stroke:0.1px currentColor;">Standard/Custom</div>
<div class="a t" style="left:421.60px;top:513.56px;font-size:8px;line-height:8px;color:#000;font-weight:400;-webkit-text-stroke:0.1px currentColor;">ized</div>
<div class="a t" style="left:498.80px;top:503.76px;font-size:8px;line-height:8px;color:#000;font-weight:400;-webkit-text-stroke:0.1px currentColor;">Process/Sub-</div>
<div class="a t" style="left:498.80px;top:513.56px;font-size:8px;line-height:8px;color:#000;font-weight:400;-webkit-text-stroke:0.1px currentColor;">Process</div>
<div class="a t" style="left:571.60px;top:503.76px;font-size:8px;line-height:8px;color:#000;font-weight:400;-webkit-text-stroke:0.1px currentColor;">Oracle</div>
<div class="a t" style="left:571.60px;top:513.56px;font-size:8px;line-height:8px;color:#000;font-weight:400;-webkit-text-stroke:0.1px currentColor;">Module(s)</div>
<div class="a t" style="left:631.60px;top:509.16px;font-size:8px;line-height:8px;color:#000;font-weight:400;-webkit-text-stroke:0.1px currentColor;">Audience</div>
<div class="a t" style="left:684.70px;top:509.16px;font-size:8px;line-height:8px;color:#000;font-weight:400;-webkit-text-stroke:0.1px currentColor;"># of Users</div>
<div class="a t" style="left:746.60px;top:509.16px;font-size:8px;line-height:8px;color:#000;font-weight:400;-webkit-text-stroke:0.1px currentColor;">Timing</div>
<div class="a t" style="left:799.80px;top:509.16px;font-size:8px;line-height:8px;color:#9c0006;font-weight:400;-webkit-text-stroke:0.1px currentColor;">Daily</div>
<div class="a t" style="left:861.40px;top:503.76px;font-size:8px;line-height:8px;color:#000;font-weight:400;-webkit-text-stroke:0.1px currentColor;">Data Latency/</div>
<div class="a t" style="left:861.40px;top:513.56px;font-size:8px;line-height:8px;color:#000;font-weight:400;-webkit-text-stroke:0.1px currentColor;">Availability</div>
<div class="a t" style="left:929.20px;top:503.76px;font-size:8px;line-height:8px;color:#000;font-weight:400;-webkit-text-stroke:0.1px currentColor;">Data</div>
<div class="a t" style="left:929.20px;top:513.56px;font-size:8px;line-height:8px;color:#000;font-weight:400;-webkit-text-stroke:0.1px currentColor;">Availability</div>
<div class="a t" style="left:995.60px;top:509.16px;font-size:8px;line-height:8px;color:#000;font-weight:400;-webkit-text-stroke:0.1px currentColor;">Identify Existing Report</div>
<div class="a t" style="left:1100.60px;top:509.16px;font-size:8px;line-height:8px;color:#000;font-weight:400;-webkit-text-stroke:0.1px currentColor;">Issues/Risks</div>
<div class="a t" style="left:1166.80px;top:509.16px;font-size:8px;line-height:8px;color:#000;font-weight:400;-webkit-text-stroke:0.1px currentColor;">In-Scope</div>
<div class="a" style="left:32px;top:529px;width:1193px;height:32px;background:#f2f2f2;"></div>
<div class="a" style="left:76px;top:529px;width:52px;height:32px;background:#1f4e79;"></div>
<div class="a" style="left:790px;top:529px;width:62px;height:32px;background:#ffeb9c;"></div>
<div class="a t" style="left:42.20px;top:542.16px;font-size:8px;line-height:8px;color:#000;font-weight:400;letter-spacing:-0.4px-webkit-text-stroke:0.1px currentColor;">110</div>
<div class="a t" style="left:77.00px;width:50px;text-align:center;top:542.16px;font-size:8px;line-height:8px;color:#fff;font-weight:400;">High</div>
<div class="a t" style="left:137.50px;top:536.76px;font-size:8px;line-height:8px;color:#000;font-weight:400;-webkit-text-stroke:0.1px currentColor;">Report</div>
<div class="a t" style="left:137.50px;top:546.56px;font-size:8px;line-height:8px;color:#000;font-weight:400;-webkit-text-stroke:0.1px currentColor;">Name</div>
<div class="a t" style="left:185.50px;top:536.76px;font-size:8px;line-height:8px;color:#000;font-weight:400;-webkit-text-stroke:0.1px currentColor;">Report</div>
<div class="a t" style="left:185.50px;top:546.56px;font-size:8px;line-height:8px;color:#000;font-weight:400;-webkit-text-stroke:0.1px currentColor;">Type</div>
<div class="a t" style="left:233.50px;top:536.76px;font-size:8px;line-height:8px;color:#000;font-weight:400;-webkit-text-stroke:0.1px currentColor;">Data</div>
<div class="a t" style="left:233.50px;top:546.56px;font-size:8px;line-height:8px;color:#000;font-weight:400;-webkit-text-stroke:0.1px currentColor;">Requirements</div>
<div class="a t" style="left:309.50px;top:536.76px;font-size:8px;line-height:8px;color:#000;font-weight:400;-webkit-text-stroke:0.1px currentColor;">Data</div>
<div class="a t" style="left:309.50px;top:546.56px;font-size:8px;line-height:8px;color:#000;font-weight:400;-webkit-text-stroke:0.1px currentColor;">Source(s)</div>
<div class="a t" style="left:373.80px;top:536.76px;font-size:8px;line-height:8px;color:#000;font-weight:400;-webkit-text-stroke:0.1px currentColor;">Source</div>
<div class="a t" style="left:373.80px;top:546.56px;font-size:8px;line-height:8px;color:#000;font-weight:400;-webkit-text-stroke:0.1px currentColor;">Systems</div>
<div class="a t" style="left:421.60px;top:536.76px;font-size:8px;line-height:8px;color:#000;font-weight:400;-webkit-text-stroke:0.1px currentColor;">Standard/Custom</div>
<div class="a t" style="left:421.60px;top:546.56px;font-size:8px;line-height:8px;color:#000;font-weight:400;-webkit-text-stroke:0.1px currentColor;">ized</div>
<div class="a t" style="left:498.80px;top:536.76px;font-size:8px;line-height:8px;color:#000;font-weight:400;-webkit-text-stroke:0.1px currentColor;">Process/Sub-</div>
<div class="a t" style="left:498.80px;top:546.56px;font-size:8px;line-height:8px;color:#000;font-weight:400;-webkit-text-stroke:0.1px currentColor;">Process</div>
<div class="a t" style="left:571.60px;top:536.76px;font-size:8px;line-height:8px;color:#000;font-weight:400;-webkit-text-stroke:0.1px currentColor;">Oracle</div>
<div class="a t" style="left:571.60px;top:546.56px;font-size:8px;line-height:8px;color:#000;font-weight:400;-webkit-text-stroke:0.1px currentColor;">Module(s)</div>
<div class="a t" style="left:631.60px;top:542.16px;font-size:8px;line-height:8px;color:#000;font-weight:400;-webkit-text-stroke:0.1px currentColor;">Audience</div>
<div class="a t" style="left:684.70px;top:542.16px;font-size:8px;line-height:8px;color:#000;font-weight:400;-webkit-text-stroke:0.1px currentColor;"># of Users</div>
<div class="a t" style="left:746.60px;top:542.16px;font-size:8px;line-height:8px;color:#000;font-weight:400;-webkit-text-stroke:0.1px currentColor;">Timing</div>
<div class="a t" style="left:799.80px;top:542.16px;font-size:8px;line-height:8px;color:#9c6500;font-weight:400;-webkit-text-stroke:0.1px currentColor;">Weekly</div>
<div class="a t" style="left:861.40px;top:536.76px;font-size:8px;line-height:8px;color:#000;font-weight:400;-webkit-text-stroke:0.1px currentColor;">Data Latency/</div>
<div class="a t" style="left:861.40px;top:546.56px;font-size:8px;line-height:8px;color:#000;font-weight:400;-webkit-text-stroke:0.1px currentColor;">Availability</div>
<div class="a t" style="left:929.20px;top:536.76px;font-size:8px;line-height:8px;color:#000;font-weight:400;-webkit-text-stroke:0.1px currentColor;">Data</div>
<div class="a t" style="left:929.20px;top:546.56px;font-size:8px;line-height:8px;color:#000;font-weight:400;-webkit-text-stroke:0.1px currentColor;">Availability</div>
<div class="a t" style="left:995.60px;top:542.16px;font-size:8px;line-height:8px;color:#000;font-weight:400;-webkit-text-stroke:0.1px currentColor;">Identify Existing Report</div>
<div class="a t" style="left:1100.60px;top:542.16px;font-size:8px;line-height:8px;color:#000;font-weight:400;-webkit-text-stroke:0.1px currentColor;">Issues/Risks</div>
<div class="a t" style="left:1166.80px;top:542.16px;font-size:8px;line-height:8px;color:#000;font-weight:400;-webkit-text-stroke:0.1px currentColor;">Out of Scope</div>
<div class="a" style="left:76px;top:561px;width:52px;height:32px;background:#2e75b6;"></div>
<div class="a" style="left:790px;top:561px;width:62px;height:32px;background:#c6efce;"></div>
<div class="a t" style="left:42.20px;top:574.16px;font-size:8px;line-height:8px;color:#000;font-weight:400;letter-spacing:-0.4px-webkit-text-stroke:0.1px currentColor;">111</div>
<div class="a t" style="left:77.00px;width:50px;text-align:center;top:574.16px;font-size:8px;line-height:8px;color:#fff;font-weight:400;">Med</div>
<div class="a t" style="left:137.50px;top:568.76px;font-size:8px;line-height:8px;color:#000;font-weight:400;-webkit-text-stroke:0.1px currentColor;">Report</div>
<div class="a t" style="left:137.50px;top:578.56px;font-size:8px;line-height:8px;color:#000;font-weight:400;-webkit-text-stroke:0.1px currentColor;">Name</div>
<div class="a t" style="left:185.50px;top:568.76px;font-size:8px;line-height:8px;color:#000;font-weight:400;-webkit-text-stroke:0.1px currentColor;">Report</div>
<div class="a t" style="left:185.50px;top:578.56px;font-size:8px;line-height:8px;color:#000;font-weight:400;-webkit-text-stroke:0.1px currentColor;">Type</div>
<div class="a t" style="left:233.50px;top:568.76px;font-size:8px;line-height:8px;color:#000;font-weight:400;-webkit-text-stroke:0.1px currentColor;">Data</div>
<div class="a t" style="left:233.50px;top:578.56px;font-size:8px;line-height:8px;color:#000;font-weight:400;-webkit-text-stroke:0.1px currentColor;">Requirements</div>
<div class="a t" style="left:309.50px;top:568.76px;font-size:8px;line-height:8px;color:#000;font-weight:400;-webkit-text-stroke:0.1px currentColor;">Data</div>
<div class="a t" style="left:309.50px;top:578.56px;font-size:8px;line-height:8px;color:#000;font-weight:400;-webkit-text-stroke:0.1px currentColor;">Source(s)</div>
<div class="a t" style="left:373.80px;top:568.76px;font-size:8px;line-height:8px;color:#000;font-weight:400;-webkit-text-stroke:0.1px currentColor;">Source</div>
<div class="a t" style="left:373.80px;top:578.56px;font-size:8px;line-height:8px;color:#000;font-weight:400;-webkit-text-stroke:0.1px currentColor;">Systems</div>
<div class="a t" style="left:421.60px;top:568.76px;font-size:8px;line-height:8px;color:#000;font-weight:400;-webkit-text-stroke:0.1px currentColor;">Standard/Custom</div>
<div class="a t" style="left:421.60px;top:578.56px;font-size:8px;line-height:8px;color:#000;font-weight:400;-webkit-text-stroke:0.1px currentColor;">ized</div>
<div class="a t" style="left:498.80px;top:568.76px;font-size:8px;line-height:8px;color:#000;font-weight:400;-webkit-text-stroke:0.1px currentColor;">Process/Sub-</div>
<div class="a t" style="left:498.80px;top:578.56px;font-size:8px;line-height:8px;color:#000;font-weight:400;-webkit-text-stroke:0.1px currentColor;">Process</div>
<div class="a t" style="left:571.60px;top:568.76px;font-size:8px;line-height:8px;color:#000;font-weight:400;-webkit-text-stroke:0.1px currentColor;">Oracle</div>
<div class="a t" style="left:571.60px;top:578.56px;font-size:8px;line-height:8px;color:#000;font-weight:400;-webkit-text-stroke:0.1px currentColor;">Module(s)</div>
<div class="a t" style="left:631.60px;top:574.16px;font-size:8px;line-height:8px;color:#000;font-weight:400;-webkit-text-stroke:0.1px currentColor;">Audience</div>
<div class="a t" style="left:684.70px;top:574.16px;font-size:8px;line-height:8px;color:#000;font-weight:400;-webkit-text-stroke:0.1px currentColor;"># of Users</div>
<div class="a t" style="left:746.60px;top:574.16px;font-size:8px;line-height:8px;color:#000;font-weight:400;-webkit-text-stroke:0.1px currentColor;">Timing</div>
<div class="a t" style="left:799.80px;top:574.16px;font-size:8px;line-height:8px;color:#006100;font-weight:400;-webkit-text-stroke:0.1px currentColor;">Monthly</div>
<div class="a t" style="left:861.40px;top:568.76px;font-size:8px;line-height:8px;color:#000;font-weight:400;-webkit-text-stroke:0.1px currentColor;">Data Latency/</div>
<div class="a t" style="left:861.40px;top:578.56px;font-size:8px;line-height:8px;color:#000;font-weight:400;-webkit-text-stroke:0.1px currentColor;">Availability</div>
<div class="a t" style="left:929.20px;top:568.76px;font-size:8px;line-height:8px;color:#000;font-weight:400;-webkit-text-stroke:0.1px currentColor;">Data</div>
<div class="a t" style="left:929.20px;top:578.56px;font-size:8px;line-height:8px;color:#000;font-weight:400;-webkit-text-stroke:0.1px currentColor;">Availability</div>
<div class="a t" style="left:995.60px;top:574.16px;font-size:8px;line-height:8px;color:#000;font-weight:400;-webkit-text-stroke:0.1px currentColor;">Identify Existing Report</div>
<div class="a t" style="left:1100.60px;top:574.16px;font-size:8px;line-height:8px;color:#000;font-weight:400;-webkit-text-stroke:0.1px currentColor;">Issues/Risks</div>
<div class="a t" style="left:1166.80px;top:574.16px;font-size:8px;line-height:8px;color:#000;font-weight:400;-webkit-text-stroke:0.1px currentColor;">In-Scope</div>
<div class="a" style="left:32px;top:593px;width:1193px;height:33px;background:#f2f2f2;"></div>
<div class="a" style="left:76px;top:593px;width:52px;height:33px;background:#9dc3e6;"></div>
<div class="a t" style="left:42.20px;top:606.16px;font-size:8px;line-height:8px;color:#000;font-weight:400;letter-spacing:-0.4px-webkit-text-stroke:0.1px currentColor;">112</div>
<div class="a t" style="left:77.00px;width:50px;text-align:center;top:606.16px;font-size:8px;line-height:8px;color:#222;font-weight:400;">Low</div>
<div class="a t" style="left:137.50px;top:600.76px;font-size:8px;line-height:8px;color:#000;font-weight:400;-webkit-text-stroke:0.1px currentColor;">Report</div>
<div class="a t" style="left:137.50px;top:610.56px;font-size:8px;line-height:8px;color:#000;font-weight:400;-webkit-text-stroke:0.1px currentColor;">Name</div>
<div class="a t" style="left:185.50px;top:600.76px;font-size:8px;line-height:8px;color:#000;font-weight:400;-webkit-text-stroke:0.1px currentColor;">Report</div>
<div class="a t" style="left:185.50px;top:610.56px;font-size:8px;line-height:8px;color:#000;font-weight:400;-webkit-text-stroke:0.1px currentColor;">Type</div>
<div class="a t" style="left:233.50px;top:600.76px;font-size:8px;line-height:8px;color:#000;font-weight:400;-webkit-text-stroke:0.1px currentColor;">Data</div>
<div class="a t" style="left:233.50px;top:610.56px;font-size:8px;line-height:8px;color:#000;font-weight:400;-webkit-text-stroke:0.1px currentColor;">Requirements</div>
<div class="a t" style="left:309.50px;top:600.76px;font-size:8px;line-height:8px;color:#000;font-weight:400;-webkit-text-stroke:0.1px currentColor;">Data</div>
<div class="a t" style="left:309.50px;top:610.56px;font-size:8px;line-height:8px;color:#000;font-weight:400;-webkit-text-stroke:0.1px currentColor;">Source(s)</div>
<div class="a t" style="left:373.80px;top:600.76px;font-size:8px;line-height:8px;color:#000;font-weight:400;-webkit-text-stroke:0.1px currentColor;">Source</div>
<div class="a t" style="left:373.80px;top:610.56px;font-size:8px;line-height:8px;color:#000;font-weight:400;-webkit-text-stroke:0.1px currentColor;">Systems</div>
<div class="a t" style="left:421.60px;top:600.76px;font-size:8px;line-height:8px;color:#000;font-weight:400;-webkit-text-stroke:0.1px currentColor;">Standard/Custom</div>
<div class="a t" style="left:421.60px;top:610.56px;font-size:8px;line-height:8px;color:#000;font-weight:400;-webkit-text-stroke:0.1px currentColor;">ized</div>
<div class="a t" style="left:498.80px;top:600.76px;font-size:8px;line-height:8px;color:#000;font-weight:400;-webkit-text-stroke:0.1px currentColor;">Process/Sub-</div>
<div class="a t" style="left:498.80px;top:610.56px;font-size:8px;line-height:8px;color:#000;font-weight:400;-webkit-text-stroke:0.1px currentColor;">Process</div>
<div class="a t" style="left:571.60px;top:600.76px;font-size:8px;line-height:8px;color:#000;font-weight:400;-webkit-text-stroke:0.1px currentColor;">Oracle</div>
<div class="a t" style="left:571.60px;top:610.56px;font-size:8px;line-height:8px;color:#000;font-weight:400;-webkit-text-stroke:0.1px currentColor;">Module(s)</div>
<div class="a t" style="left:631.60px;top:606.16px;font-size:8px;line-height:8px;color:#000;font-weight:400;-webkit-text-stroke:0.1px currentColor;">Audience</div>
<div class="a t" style="left:684.70px;top:606.16px;font-size:8px;line-height:8px;color:#000;font-weight:400;-webkit-text-stroke:0.1px currentColor;"># of Users</div>
<div class="a t" style="left:746.60px;top:606.16px;font-size:8px;line-height:8px;color:#000;font-weight:400;-webkit-text-stroke:0.1px currentColor;">Timing</div>
<div class="a t" style="left:799.80px;top:606.16px;font-size:8px;line-height:8px;color:#111;font-weight:400;-webkit-text-stroke:0.1px currentColor;">Annual</div>
<div class="a t" style="left:861.40px;top:600.76px;font-size:8px;line-height:8px;color:#000;font-weight:400;-webkit-text-stroke:0.1px currentColor;">Data Latency/</div>
<div class="a t" style="left:861.40px;top:610.56px;font-size:8px;line-height:8px;color:#000;font-weight:400;-webkit-text-stroke:0.1px currentColor;">Availability</div>
<div class="a t" style="left:929.20px;top:600.76px;font-size:8px;line-height:8px;color:#000;font-weight:400;-webkit-text-stroke:0.1px currentColor;">Data</div>
<div class="a t" style="left:929.20px;top:610.56px;font-size:8px;line-height:8px;color:#000;font-weight:400;-webkit-text-stroke:0.1px currentColor;">Availability</div>
<div class="a t" style="left:995.60px;top:606.16px;font-size:8px;line-height:8px;color:#000;font-weight:400;-webkit-text-stroke:0.1px currentColor;">Identify Existing Report</div>
<div class="a t" style="left:1100.60px;top:606.16px;font-size:8px;line-height:8px;color:#000;font-weight:400;-webkit-text-stroke:0.1px currentColor;">Issues/Risks</div>
<div class="a t" style="left:1166.80px;top:606.16px;font-size:8px;line-height:8px;color:#000;font-weight:400;-webkit-text-stroke:0.1px currentColor;">Out of Scope</div>
<div class="a" style="left:76px;top:626px;width:52px;height:32px;background:#1f4e79;"></div>
<div class="a" style="left:790px;top:626px;width:62px;height:32px;background:#ffc7ce;"></div>
<div class="a t" style="left:42.20px;top:639.16px;font-size:8px;line-height:8px;color:#000;font-weight:400;letter-spacing:-0.4px-webkit-text-stroke:0.1px currentColor;">113</div>
<div class="a t" style="left:77.00px;width:50px;text-align:center;top:639.16px;font-size:8px;line-height:8px;color:#fff;font-weight:400;">High</div>
<div class="a t" style="left:137.50px;top:633.76px;font-size:8px;line-height:8px;color:#000;font-weight:400;-webkit-text-stroke:0.1px currentColor;">Report</div>
<div class="a t" style="left:137.50px;top:643.56px;font-size:8px;line-height:8px;color:#000;font-weight:400;-webkit-text-stroke:0.1px currentColor;">Name</div>
<div class="a t" style="left:185.50px;top:633.76px;font-size:8px;line-height:8px;color:#000;font-weight:400;-webkit-text-stroke:0.1px currentColor;">Report</div>
<div class="a t" style="left:185.50px;top:643.56px;font-size:8px;line-height:8px;color:#000;font-weight:400;-webkit-text-stroke:0.1px currentColor;">Type</div>
<div class="a t" style="left:233.50px;top:633.76px;font-size:8px;line-height:8px;color:#000;font-weight:400;-webkit-text-stroke:0.1px currentColor;">Data</div>
<div class="a t" style="left:233.50px;top:643.56px;font-size:8px;line-height:8px;color:#000;font-weight:400;-webkit-text-stroke:0.1px currentColor;">Requirements</div>
<div class="a t" style="left:309.50px;top:633.76px;font-size:8px;line-height:8px;color:#000;font-weight:400;-webkit-text-stroke:0.1px currentColor;">Data</div>
<div class="a t" style="left:309.50px;top:643.56px;font-size:8px;line-height:8px;color:#000;font-weight:400;-webkit-text-stroke:0.1px currentColor;">Source(s)</div>
<div class="a t" style="left:373.80px;top:633.76px;font-size:8px;line-height:8px;color:#000;font-weight:400;-webkit-text-stroke:0.1px currentColor;">Source</div>
<div class="a t" style="left:373.80px;top:643.56px;font-size:8px;line-height:8px;color:#000;font-weight:400;-webkit-text-stroke:0.1px currentColor;">Systems</div>
<div class="a t" style="left:421.60px;top:633.76px;font-size:8px;line-height:8px;color:#000;font-weight:400;-webkit-text-stroke:0.1px currentColor;">Standard/Custom</div>
<div class="a t" style="left:421.60px;top:643.56px;font-size:8px;line-height:8px;color:#000;font-weight:400;-webkit-text-stroke:0.1px currentColor;">ized</div>
<div class="a t" style="left:498.80px;top:633.76px;font-size:8px;line-height:8px;color:#000;font-weight:400;-webkit-text-stroke:0.1px currentColor;">Process/Sub-</div>
<div class="a t" style="left:498.80px;top:643.56px;font-size:8px;line-height:8px;color:#000;font-weight:400;-webkit-text-stroke:0.1px currentColor;">Process</div>
<div class="a t" style="left:571.60px;top:633.76px;font-size:8px;line-height:8px;color:#000;font-weight:400;-webkit-text-stroke:0.1px currentColor;">Oracle</div>
<div class="a t" style="left:571.60px;top:643.56px;font-size:8px;line-height:8px;color:#000;font-weight:400;-webkit-text-stroke:0.1px currentColor;">Module(s)</div>
<div class="a t" style="left:631.60px;top:639.16px;font-size:8px;line-height:8px;color:#000;font-weight:400;-webkit-text-stroke:0.1px currentColor;">Audience</div>
<div class="a t" style="left:684.70px;top:639.16px;font-size:8px;line-height:8px;color:#000;font-weight:400;-webkit-text-stroke:0.1px currentColor;"># of Users</div>
<div class="a t" style="left:746.60px;top:639.16px;font-size:8px;line-height:8px;color:#000;font-weight:400;-webkit-text-stroke:0.1px currentColor;">Timing</div>
<div class="a t" style="left:799.80px;top:639.16px;font-size:8px;line-height:8px;color:#9c0006;font-weight:400;-webkit-text-stroke:0.1px currentColor;">Daily</div>
<div class="a t" style="left:861.40px;top:633.76px;font-size:8px;line-height:8px;color:#000;font-weight:400;-webkit-text-stroke:0.1px currentColor;">Data Latency/</div>
<div class="a t" style="left:861.40px;top:643.56px;font-size:8px;line-height:8px;color:#000;font-weight:400;-webkit-text-stroke:0.1px currentColor;">Availability</div>
<div class="a t" style="left:929.20px;top:633.76px;font-size:8px;line-height:8px;color:#000;font-weight:400;-webkit-text-stroke:0.1px currentColor;">Data</div>
<div class="a t" style="left:929.20px;top:643.56px;font-size:8px;line-height:8px;color:#000;font-weight:400;-webkit-text-stroke:0.1px currentColor;">Availability</div>
<div class="a t" style="left:995.60px;top:639.16px;font-size:8px;line-height:8px;color:#000;font-weight:400;-webkit-text-stroke:0.1px currentColor;">Identify Existing Report</div>
<div class="a t" style="left:1100.60px;top:639.16px;font-size:8px;line-height:8px;color:#000;font-weight:400;-webkit-text-stroke:0.1px currentColor;">Issues/Risks</div>
<div class="a t" style="left:1166.80px;top:639.16px;font-size:8px;line-height:8px;color:#000;font-weight:400;-webkit-text-stroke:0.1px currentColor;">In-Scope</div>
<div class="a" style="left:32px;top:658px;width:1193px;height:33px;background:#f2f2f2;"></div>
<div class="a" style="left:76px;top:658px;width:52px;height:33px;background:#2e75b6;"></div>
<div class="a" style="left:790px;top:658px;width:62px;height:33px;background:#ffeb9c;"></div>
<div class="a t" style="left:42.20px;top:671.16px;font-size:8px;line-height:8px;color:#000;font-weight:400;letter-spacing:-0.4px-webkit-text-stroke:0.1px currentColor;">114</div>
<div class="a t" style="left:77.00px;width:50px;text-align:center;top:671.16px;font-size:8px;line-height:8px;color:#fff;font-weight:400;">Med</div>
<div class="a t" style="left:137.50px;top:665.76px;font-size:8px;line-height:8px;color:#000;font-weight:400;-webkit-text-stroke:0.1px currentColor;">Report</div>
<div class="a t" style="left:137.50px;top:675.56px;font-size:8px;line-height:8px;color:#000;font-weight:400;-webkit-text-stroke:0.1px currentColor;">Name</div>
<div class="a t" style="left:185.50px;top:665.76px;font-size:8px;line-height:8px;color:#000;font-weight:400;-webkit-text-stroke:0.1px currentColor;">Report</div>
<div class="a t" style="left:185.50px;top:675.56px;font-size:8px;line-height:8px;color:#000;font-weight:400;-webkit-text-stroke:0.1px currentColor;">Type</div>
<div class="a t" style="left:233.50px;top:665.76px;font-size:8px;line-height:8px;color:#000;font-weight:400;-webkit-text-stroke:0.1px currentColor;">Data</div>
<div class="a t" style="left:233.50px;top:675.56px;font-size:8px;line-height:8px;color:#000;font-weight:400;-webkit-text-stroke:0.1px currentColor;">Requirements</div>
<div class="a t" style="left:309.50px;top:665.76px;font-size:8px;line-height:8px;color:#000;font-weight:400;-webkit-text-stroke:0.1px currentColor;">Data</div>
<div class="a t" style="left:309.50px;top:675.56px;font-size:8px;line-height:8px;color:#000;font-weight:400;-webkit-text-stroke:0.1px currentColor;">Source(s)</div>
<div class="a t" style="left:373.80px;top:665.76px;font-size:8px;line-height:8px;color:#000;font-weight:400;-webkit-text-stroke:0.1px currentColor;">Source</div>
<div class="a t" style="left:373.80px;top:675.56px;font-size:8px;line-height:8px;color:#000;font-weight:400;-webkit-text-stroke:0.1px currentColor;">Systems</div>
<div class="a t" style="left:421.60px;top:665.76px;font-size:8px;line-height:8px;color:#000;font-weight:400;-webkit-text-stroke:0.1px currentColor;">Standard/Custom</div>
<div class="a t" style="left:421.60px;top:675.56px;font-size:8px;line-height:8px;color:#000;font-weight:400;-webkit-text-stroke:0.1px currentColor;">ized</div>
<div class="a t" style="left:498.80px;top:665.76px;font-size:8px;line-height:8px;color:#000;font-weight:400;-webkit-text-stroke:0.1px currentColor;">Process/Sub-</div>
<div class="a t" style="left:498.80px;top:675.56px;font-size:8px;line-height:8px;color:#000;font-weight:400;-webkit-text-stroke:0.1px currentColor;">Process</div>
<div class="a t" style="left:571.60px;top:665.76px;font-size:8px;line-height:8px;color:#000;font-weight:400;-webkit-text-stroke:0.1px currentColor;">Oracle</div>
<div class="a t" style="left:571.60px;top:675.56px;font-size:8px;line-height:8px;color:#000;font-weight:400;-webkit-text-stroke:0.1px currentColor;">Module(s)</div>
<div class="a t" style="left:631.60px;top:671.16px;font-size:8px;line-height:8px;color:#000;font-weight:400;-webkit-text-stroke:0.1px currentColor;">Audience</div>
<div class="a t" style="left:684.70px;top:671.16px;font-size:8px;line-height:8px;color:#000;font-weight:400;-webkit-text-stroke:0.1px currentColor;"># of Users</div>
<div class="a t" style="left:746.60px;top:671.16px;font-size:8px;line-height:8px;color:#000;font-weight:400;-webkit-text-stroke:0.1px currentColor;">Timing</div>
<div class="a t" style="left:799.80px;top:671.16px;font-size:8px;line-height:8px;color:#9c6500;font-weight:400;-webkit-text-stroke:0.1px currentColor;">Weekly</div>
<div class="a t" style="left:861.40px;top:665.76px;font-size:8px;line-height:8px;color:#000;font-weight:400;-webkit-text-stroke:0.1px currentColor;">Data Latency/</div>
<div class="a t" style="left:861.40px;top:675.56px;font-size:8px;line-height:8px;color:#000;font-weight:400;-webkit-text-stroke:0.1px currentColor;">Availability</div>
<div class="a t" style="left:929.20px;top:665.76px;font-size:8px;line-height:8px;color:#000;font-weight:400;-webkit-text-stroke:0.1px currentColor;">Data</div>
<div class="a t" style="left:929.20px;top:675.56px;font-size:8px;line-height:8px;color:#000;font-weight:400;-webkit-text-stroke:0.1px currentColor;">Availability</div>
<div class="a t" style="left:995.60px;top:671.16px;font-size:8px;line-height:8px;color:#000;font-weight:400;-webkit-text-stroke:0.1px currentColor;">Identify Existing Report</div>
<div class="a t" style="left:1100.60px;top:671.16px;font-size:8px;line-height:8px;color:#000;font-weight:400;-webkit-text-stroke:0.1px currentColor;">Issues/Risks</div>
<div class="a t" style="left:1166.80px;top:671.16px;font-size:8px;line-height:8px;color:#000;font-weight:400;-webkit-text-stroke:0.1px currentColor;">Out of Scope</div>
<div class="a" style="left:76px;top:691px;width:52px;height:18px;background:#9dc3e6;"></div>
<div class="a" style="left:790px;top:691px;width:62px;height:18px;background:#c6efce;"></div>
<div class="a t" style="left:42.20px;top:704.16px;font-size:8px;line-height:8px;color:#000;font-weight:400;letter-spacing:-0.4px-webkit-text-stroke:0.1px currentColor;">115</div>
<div class="a t" style="left:77.00px;width:50px;text-align:center;top:704.16px;font-size:8px;line-height:8px;color:#222;font-weight:400;">Low</div>
<div class="a t" style="left:137.50px;top:698.76px;font-size:8px;line-height:8px;color:#000;font-weight:400;-webkit-text-stroke:0.1px currentColor;">Report</div>
<div class="a t" style="left:137.50px;top:708.56px;font-size:8px;line-height:8px;color:#000;font-weight:400;-webkit-text-stroke:0.1px currentColor;">Name</div>
<div class="a t" style="left:185.50px;top:698.76px;font-size:8px;line-height:8px;color:#000;font-weight:400;-webkit-text-stroke:0.1px currentColor;">Report</div>
<div class="a t" style="left:185.50px;top:708.56px;font-size:8px;line-height:8px;color:#000;font-weight:400;-webkit-text-stroke:0.1px currentColor;">Type</div>
<div class="a t" style="left:233.50px;top:698.76px;font-size:8px;line-height:8px;color:#000;font-weight:400;-webkit-text-stroke:0.1px currentColor;">Data</div>
<div class="a t" style="left:233.50px;top:708.56px;font-size:8px;line-height:8px;color:#000;font-weight:400;-webkit-text-stroke:0.1px currentColor;">Requirements</div>
<div class="a t" style="left:309.50px;top:698.76px;font-size:8px;line-height:8px;color:#000;font-weight:400;-webkit-text-stroke:0.1px currentColor;">Data</div>
<div class="a t" style="left:309.50px;top:708.56px;font-size:8px;line-height:8px;color:#000;font-weight:400;-webkit-text-stroke:0.1px currentColor;">Source(s)</div>
<div class="a t" style="left:373.80px;top:698.76px;font-size:8px;line-height:8px;color:#000;font-weight:400;-webkit-text-stroke:0.1px currentColor;">Source</div>
<div class="a t" style="left:373.80px;top:708.56px;font-size:8px;line-height:8px;color:#000;font-weight:400;-webkit-text-stroke:0.1px currentColor;">Systems</div>
<div class="a t" style="left:421.60px;top:698.76px;font-size:8px;line-height:8px;color:#000;font-weight:400;-webkit-text-stroke:0.1px currentColor;">Standard/Custom</div>
<div class="a t" style="left:421.60px;top:708.56px;font-size:8px;line-height:8px;color:#000;font-weight:400;-webkit-text-stroke:0.1px currentColor;">ized</div>
<div class="a t" style="left:498.80px;top:698.76px;font-size:8px;line-height:8px;color:#000;font-weight:400;-webkit-text-stroke:0.1px currentColor;">Process/Sub-</div>
<div class="a t" style="left:498.80px;top:708.56px;font-size:8px;line-height:8px;color:#000;font-weight:400;-webkit-text-stroke:0.1px currentColor;">Process</div>
<div class="a t" style="left:571.60px;top:698.76px;font-size:8px;line-height:8px;color:#000;font-weight:400;-webkit-text-stroke:0.1px currentColor;">Oracle</div>
<div class="a t" style="left:571.60px;top:708.56px;font-size:8px;line-height:8px;color:#000;font-weight:400;-webkit-text-stroke:0.1px currentColor;">Module(s)</div>
<div class="a t" style="left:631.60px;top:704.16px;font-size:8px;line-height:8px;color:#000;font-weight:400;-webkit-text-stroke:0.1px currentColor;">Audience</div>
<div class="a t" style="left:684.70px;top:704.16px;font-size:8px;line-height:8px;color:#000;font-weight:400;-webkit-text-stroke:0.1px currentColor;"># of Users</div>
<div class="a t" style="left:746.60px;top:704.16px;font-size:8px;line-height:8px;color:#000;font-weight:400;-webkit-text-stroke:0.1px currentColor;">Timing</div>
<div class="a t" style="left:799.80px;top:704.16px;font-size:8px;line-height:8px;color:#006100;font-weight:400;-webkit-text-stroke:0.1px currentColor;">Monthly</div>
<div class="a t" style="left:861.40px;top:698.76px;font-size:8px;line-height:8px;color:#000;font-weight:400;-webkit-text-stroke:0.1px currentColor;">Data Latency/</div>
<div class="a t" style="left:861.40px;top:708.56px;font-size:8px;line-height:8px;color:#000;font-weight:400;-webkit-text-stroke:0.1px currentColor;">Availability</div>
<div class="a t" style="left:929.20px;top:698.76px;font-size:8px;line-height:8px;color:#000;font-weight:400;-webkit-text-stroke:0.1px currentColor;">Data</div>
<div class="a t" style="left:929.20px;top:708.56px;font-size:8px;line-height:8px;color:#000;font-weight:400;-webkit-text-stroke:0.1px currentColor;">Availability</div>
<div class="a t" style="left:995.60px;top:704.16px;font-size:8px;line-height:8px;color:#000;font-weight:400;-webkit-text-stroke:0.1px currentColor;">Identify Existing Report</div>
<div class="a t" style="left:1100.60px;top:704.16px;font-size:8px;line-height:8px;color:#000;font-weight:400;-webkit-text-stroke:0.1px currentColor;">Issues/Risks</div>
<div class="a t" style="left:1166.80px;top:704.16px;font-size:8px;line-height:8px;color:#000;font-weight:400;-webkit-text-stroke:0.1px currentColor;">In-Scope</div>
<div class="a" style="left:32px;top:270px;width:1193px;height:1px;background:rgba(150,150,150,0.45);"></div>
<div class="a" style="left:32px;top:302px;width:1193px;height:1px;background:rgba(150,150,150,0.45);"></div>
<div class="a" style="left:32px;top:334px;width:1193px;height:1px;background:rgba(150,150,150,0.45);"></div>
<div class="a" style="left:32px;top:367px;width:1193px;height:1px;background:rgba(150,150,150,0.45);"></div>
<div class="a" style="left:32px;top:399px;width:1193px;height:1px;background:rgba(150,150,150,0.45);"></div>
<div class="a" style="left:32px;top:431px;width:1193px;height:1px;background:rgba(150,150,150,0.45);"></div>
<div class="a" style="left:32px;top:464px;width:1193px;height:1px;background:rgba(150,150,150,0.45);"></div>
<div class="a" style="left:32px;top:496px;width:1193px;height:1px;background:rgba(150,150,150,0.45);"></div>
<div class="a" style="left:32px;top:529px;width:1193px;height:1px;background:rgba(150,150,150,0.45);"></div>
<div class="a" style="left:32px;top:561px;width:1193px;height:1px;background:rgba(150,150,150,0.45);"></div>
<div class="a" style="left:32px;top:593px;width:1193px;height:1px;background:rgba(150,150,150,0.45);"></div>
<div class="a" style="left:32px;top:626px;width:1193px;height:1px;background:rgba(150,150,150,0.45);"></div>
<div class="a" style="left:32px;top:658px;width:1193px;height:1px;background:rgba(150,150,150,0.45);"></div>
<div class="a" style="left:32px;top:691px;width:1193px;height:1px;background:rgba(150,150,150,0.45);"></div>
<div class="a" style="left:1382px;top:125px;width:18px;height:585px;background:#fff;"></div>
<div class="a" style="left:1384px;top:140px;width:13px;height:557px;background:#efefef;border-left:1px solid #d8d8d8;border-right:1px solid #d8d8d8;box-sizing:border-box;"></div>
<div class="a" style="left:1384px;top:127px;width:13px;height:14px;background:#fff;border:1px solid #c6c6c6;box-sizing:border-box;"></div>
<svg class="a" style="left:1386px;top:131px" width="9" height="5" viewBox="0 0 9 5"><path d="M0.5 4.5 H8.5 L4.5 0.5 Z" fill="#666"/></svg>
<div class="a" style="left:1384px;top:140px;width:13px;height:287px;background:#fff;border:1px solid #c6c6c6;box-sizing:border-box;"></div>
<div class="a" style="left:1384px;top:696px;width:13px;height:13px;background:#fff;border:1px solid #c6c6c6;box-sizing:border-box;"></div>
<svg class="a" style="left:1386px;top:700px" width="9" height="5" viewBox="0 0 9 5"><path d="M0.5 0.5 H8.5 L4.5 4.5 Z" fill="#666"/></svg>
<div class="a" style="left:0px;top:709px;width:1400px;height:25px;background:#f4f4f4;"></div>
<div class="a" style="left:0px;top:709px;width:1382px;height:1px;background:#c6c6c6;"></div>
<svg class="a" style="left:22px;top:717px" width="6" height="9" viewBox="0 0 6 9"><path d="M5 0.5 V8.5 L1 4.5 Z" fill="#c0c0c0"/></svg>
<svg class="a" style="left:48px;top:717px" width="6" height="9" viewBox="0 0 6 9"><path d="M1 0.5 V8.5 L5 4.5 Z" fill="#c0c0c0"/></svg>
<div class="a" style="left:87px;top:709px;width:96px;height:23px;background:#fff;border-left:1px solid #c6c6c6;border-right:1px solid #c6c6c6;box-sizing:border-box;"></div>
<div class="a" style="left:88px;top:729px;width:94px;height:2px;background:#217346;"></div>
<div class="a t" style="left:98.20px;top:715.66px;font-size:11px;line-height:11px;color:#217346;font-weight:700;letter-spacing:0.05px">Requirements</div>
<svg class="a" style="left:211px;top:714px" width="16" height="16" viewBox="0 0 16 16"><circle cx="8" cy="7.5" r="6.5" fill="none" stroke="#8a8a8a" stroke-width="1.2"/><path d="M8 4 V11 M4.5 7.5 H11.5" stroke="#666" stroke-width="1.6"/></svg>
<svg class="a" style="left:839px;top:716px" width="4" height="12" viewBox="0 0 4 12"><circle cx="2" cy="2" r="0.9" fill="#999"/><circle cx="2" cy="6" r="0.9" fill="#999"/><circle cx="2" cy="10" r="0.9" fill="#999"/></svg>
<div class="a" style="left:855px;top:715px;width:527px;height:14px;background:#e9e9e9;"></div>
<div class="a" style="left:855px;top:715px;width:13px;height:13px;background:#fff;border:1px solid #c6c6c6;box-sizing:border-box;"></div>
<svg class="a" style="left:858px;top:717px" width="6" height="9" viewBox="0 0 6 9"><path d="M5 0.5 V8.5 L1 4.5 Z" fill="#666"/></svg>
<div class="a" style="left:867px;top:715px;width:480px;height:13px;background:#fff;border:1px solid #c6c6c6;box-sizing:border-box;"></div>
<div class="a" style="left:1368px;top:715px;width:14px;height:13px;background:#fff;border:1px solid #c6c6c6;box-sizing:border-box;"></div>
<svg class="a" style="left:1373px;top:717px" width="6" height="9" viewBox="0 0 6 9"><path d="M1 0.5 V8.5 L5 4.5 Z" fill="#666"/></svg>
<div class="a" style="left:0px;top:734px;width:1400px;height:19px;background:#217346;"></div>
<div class="a t" style="left:6.60px;top:739.09px;font-size:8.5px;line-height:8.5px;color:#e8f2ec;font-weight:400;letter-spacing:-0.1px">READY</div>
<svg class="a" style="left:52px;top:737px" width="13" height="13" viewBox="0 0 13 13"><rect x="2.5" y="3.5" width="10" height="9" fill="none" stroke="#e8f2ec"/><path d="M2.5 6.5 H12.5 M2.5 9.5 H12.5 M6 3.5 V12.5 M9 3.5 V12.5" stroke="#e8f2ec"/><circle cx="3" cy="3" r="2.5" fill="#e8f2ec"/></svg>
<div class="a" style="left:1150px;top:734px;width:33px;height:19px;background:#0f5a30;"></div>
<svg class="a" style="left:1160px;top:737px" width="12" height="12" viewBox="0 0 12 12"><rect x="0.5" y="0.5" width="11" height="11" fill="none" stroke="#fff"/><path d="M0.5 4.2 H11.5 M0.5 7.8 H11.5 M4.2 0.5 V11.5 M7.8 0.5 V11.5" stroke="#fff"/></svg>
<svg class="a" style="left:1193px;top:737px" width="13" height="12" viewBox="0 0 13 12"><rect x="0.5" y="0.5" width="12" height="11" fill="none" stroke="#dfeee5"/><rect x="3.5" y="2.5" width="6" height="7" fill="none" stroke="#dfeee5"/><path d="M4.5 5 H8.5 M4.5 7 H8.5" stroke="#dfeee5"/></svg>
<svg class="a" style="left:1226px;top:737px" width="13" height="12" viewBox="0 0 13 12"><rect x="0.5" y="0.5" width="12" height="11" fill="none" stroke="#dfeee5"/><rect x="2" y="1" width="3" height="5" fill="#dfeee5"/><rect x="7" y="1" width="3" height="5" fill="#dfeee5"/><path d="M0.5 6.5 H12.5" stroke="#dfeee5"/></svg>
<div class="a" style="left:1254px;top:743px;width:5px;height:2px;background:#e8f2ec;"></div>
<div class="a" style="left:1263px;top:743px;width:87px;height:1px;background:#a8cbb6;"></div>
<div class="a" style="left:1291px;top:738px;width:4px;height:11px;background:#fff;"></div>
<div class="a" style="left:1306px;top:740px;width:1px;height:6px;background:#a8cbb6;"></div>
<svg class="a" style="left:1353px;top:739px" width="9" height="9" viewBox="0 0 9 9"><path d="M4.5 0.5 V8.5 M0.5 4.5 H8.5" stroke="#fff" stroke-width="1.8"/></svg>
<div class="a t" style="left:1374.00px;top:739.73px;font-size:9px;line-height:9px;color:#e8f2ec;font-weight:400;letter-spacing:-0.2px">70%</div>
</body></html>
